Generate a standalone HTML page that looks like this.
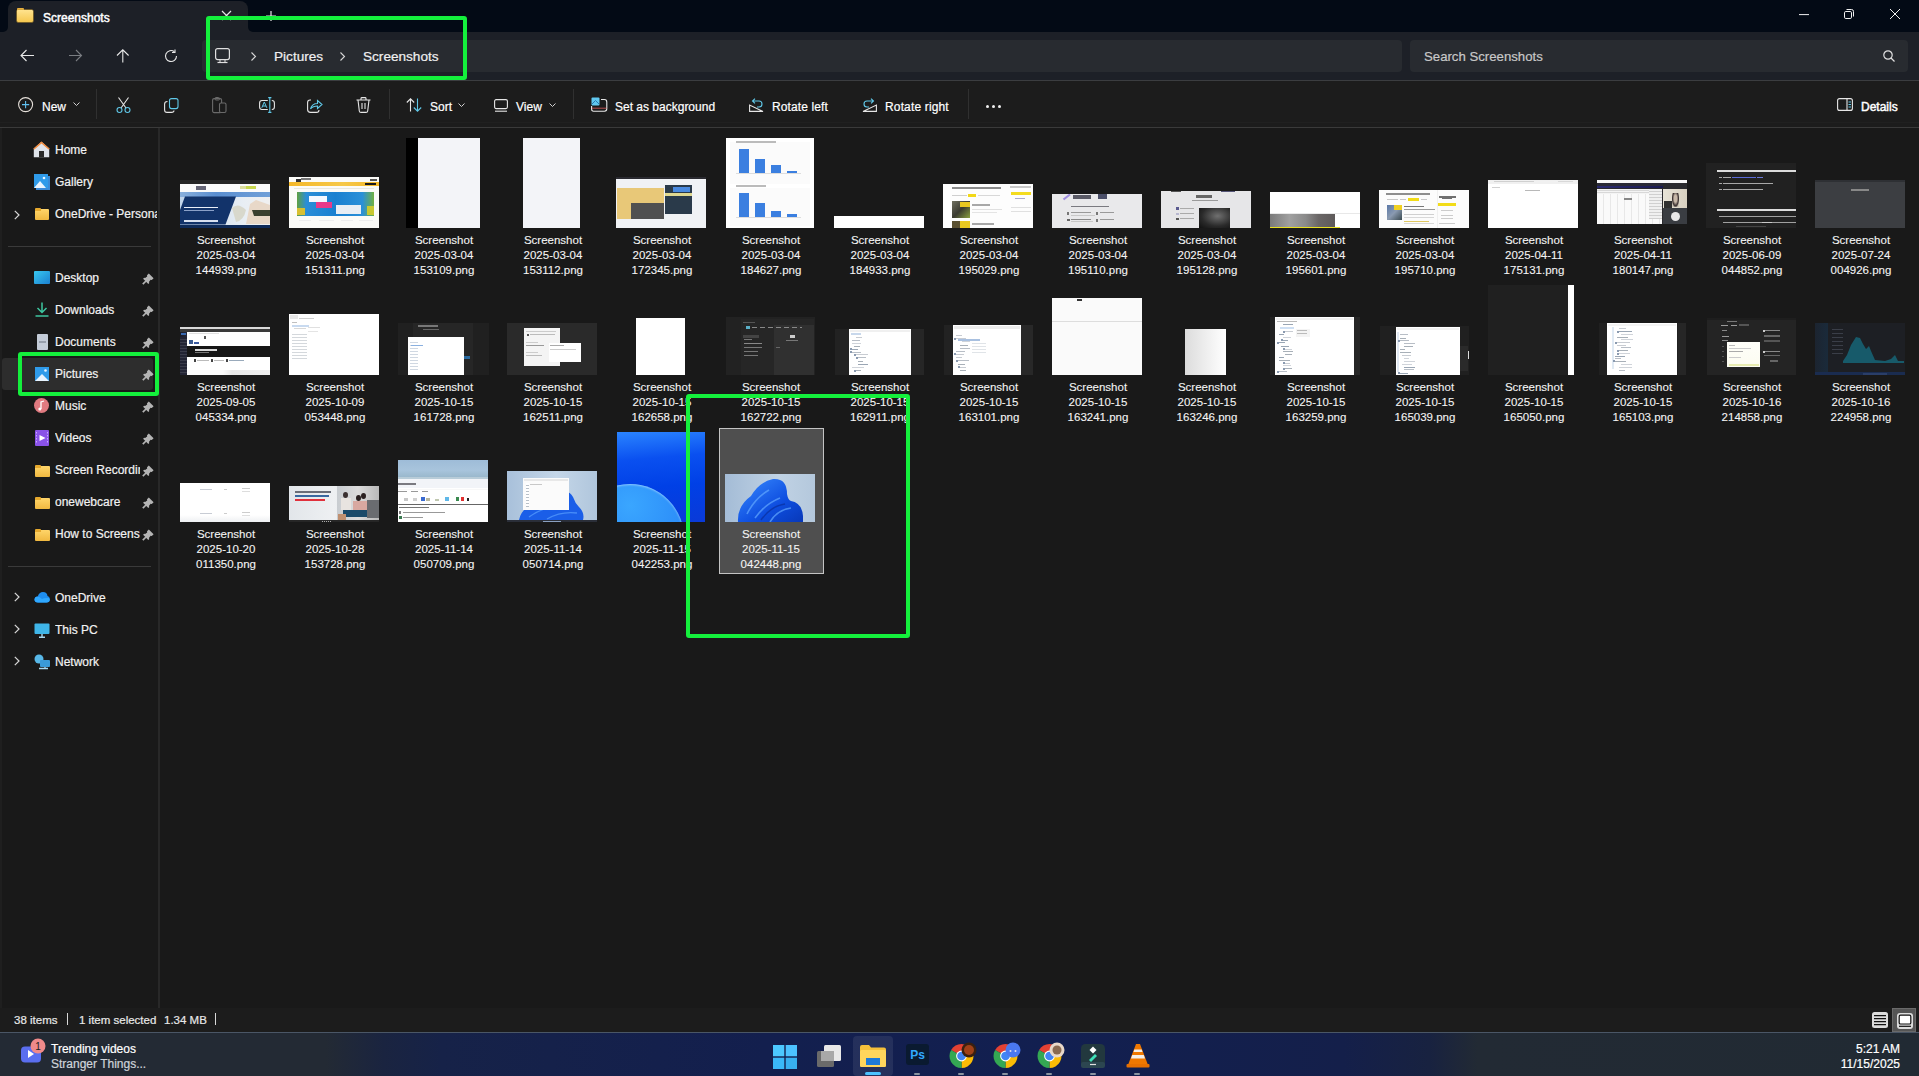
<!DOCTYPE html><html><head><meta charset="utf-8"><style>
*{box-sizing:border-box}
html,body{margin:0;padding:0}
body{width:1919px;height:1076px;overflow:hidden;position:relative;background:#191919;font-family:"Liberation Sans",sans-serif;color:#fff}
div{position:absolute}
.t{white-space:nowrap;line-height:1;-webkit-text-stroke:0.2px currentColor}
svg{position:absolute;overflow:visible}
.lbl{width:109px;text-align:center;font-size:11.5px;line-height:15px;color:#f2f2f2;white-space:nowrap}
</style></head><body><div style="left:0px;top:0px;width:1919px;height:32px;background:#030a15"></div><div style="left:0px;top:32px;width:1919px;height:48px;background:#1d2027"></div><div style="left:8px;top:1px;width:240px;height:40px;background:#1d2027;border-radius:8px 8px 0 0"></div><div style="left:0px;top:24px;width:9px;height:8px;background:#1d2027"></div><div style="left:0px;top:0px;width:8px;height:32px;background:#030a15;border-radius:0 0 5px 0"></div><div style="left:247px;top:24px;width:8px;height:8px;background:#1d2027"></div><div style="left:248px;top:0px;width:1671px;height:32px;background:#030a15;border-radius:0 0 0 5px"></div><div style="left:17px;top:8px;width:7px;height:3px;background:#e8b040;border-radius:1px 1px 0 0"></div><div style="left:17px;top:10px;width:16px;height:12px;background:linear-gradient(#ffe38e,#f6c850);border-radius:1px;box-shadow:0 0 0 0.5px #c89a30"></div><div class="t" style="left:43px;top:11.5px;font-size:12px;color:#ffffff;-webkit-text-stroke:0.45px #fff">Screenshots</div><svg style="left:222px;top:11px" width="9" height="9"><path d="M0 0L9 9M9 0L0 9" stroke="#e6e6e6" stroke-width="1.2"/></svg><svg style="left:266px;top:11px" width="10" height="10"><path d="M5 0V10M0 5H10" stroke="#e6e6e6" stroke-width="1.2"/></svg><svg style="left:1799px;top:14px" width="10" height="2"><path d="M0 0.6H10" stroke="#f0f0f0" stroke-width="1"/></svg><svg style="left:1844px;top:9px" width="10" height="10"><rect x="0.5" y="2.5" width="7" height="7" rx="1.3" fill="none" stroke="#f0f0f0" stroke-width="1"/><path d="M2.5 0.5H7.5Q9.5 0.5 9.5 2.5V7.5" fill="none" stroke="#f0f0f0" stroke-width="1"/></svg><svg style="left:1890px;top:9px" width="10" height="10"><path d="M0 0L10 10M10 0L0 10" stroke="#f0f0f0" stroke-width="1"/></svg><svg style="left:20px;top:49px" width="15" height="13"><path d="M6.5 1L1 6.5L6.5 12M1 6.5H14" fill="none" stroke="#e8e8e8" stroke-width="1.1"/></svg><svg style="left:68px;top:49px" width="15" height="13"><path d="M8 1L13.5 6.5L8 12M13.5 6.5H1" fill="none" stroke="#7a7d82" stroke-width="1.1"/></svg><svg style="left:116px;top:49px" width="14" height="14"><path d="M1 6.5L6.8 0.8L12.6 6.5M6.8 1V13.5" fill="none" stroke="#e8e8e8" stroke-width="1.1"/></svg><svg style="left:164px;top:49px" width="14" height="14"><path d="M12.5 7A5.5 5.5 0 1 1 10.4 2.7" fill="none" stroke="#e8e8e8" stroke-width="1.1"/><path d="M11 0.5V3.5H8" fill="none" stroke="#e8e8e8" stroke-width="1.1"/></svg><div style="left:202px;top:40px;width:1200px;height:32px;background:#282b30;border-radius:4px"></div><svg style="left:215px;top:48px" width="15" height="16"><rect x="0.6" y="0.6" width="13.8" height="11" rx="2" fill="none" stroke="#e0e0e0" stroke-width="1.2"/><path d="M2.5 14.5H12.5" stroke="#e0e0e0" stroke-width="1.2"/><path d="M5 12V14.5M10 12V14.5" stroke="#e0e0e0" stroke-width="1"/></svg><svg style="left:251px;top:52px" width="5" height="9"><path d="M0.5 0.5L4.5 4.5L0.5 8.5" fill="none" stroke="#d8d8d8" stroke-width="1.1"/></svg><div class="t" style="left:274px;top:50px;font-size:13.6px;color:#f0f0f0;">Pictures</div><svg style="left:340px;top:52px" width="5" height="9"><path d="M0.5 0.5L4.5 4.5L0.5 8.5" fill="none" stroke="#d8d8d8" stroke-width="1.1"/></svg><div class="t" style="left:363px;top:50px;font-size:13.6px;color:#f0f0f0;">Screenshots</div><div style="left:1410px;top:40px;width:498px;height:32px;background:#282b30;border-radius:4px"></div><div class="t" style="left:1424px;top:50px;font-size:13.2px;color:#c8c8c8;">Search Screenshots</div><svg style="left:1883px;top:50px" width="12" height="12"><circle cx="5" cy="5" r="4.2" fill="none" stroke="#e0e0e0" stroke-width="1.2"/><path d="M8 8L11.5 11.5" stroke="#e0e0e0" stroke-width="1.3"/></svg><div style="left:0px;top:80px;width:1919px;height:1px;background:#3b3d40"></div><div style="left:0px;top:81px;width:1919px;height:46px;background:#1c1c1c"></div><div style="left:0px;top:127px;width:1919px;height:1px;background:#3a3a3a"></div><div style="left:0px;top:122px;width:1919px;height:1px;background:#202020"></div><svg style="left:18px;top:97px" width="16" height="16" viewBox="0 0 16 16"><circle cx="7.6" cy="7.6" r="7" fill="none" stroke="#e6e0da" stroke-width="1.1"/><path d="M7.6 4V11.2M4 7.6H11.2" stroke="#60c0f0" stroke-width="1.1"/></svg><div class="t" style="left:42px;top:101px;font-size:12px;color:#ffffff;">New</div><svg style="left:73px;top:102px" width="7" height="5" viewBox="0 0 7 5"><path d="M0.5 0.5L3.5 3.5L6.5 0.5" fill="none" stroke="#d0d0d0" stroke-width="1"/></svg><div style="left:96px;top:89px;width:1px;height:30px;background:#303030"></div><svg style="left:116px;top:97px" width="15" height="16" viewBox="0 0 15 16"><path d="M2.5 0.5L10 11M12.5 0.5L5 11" stroke="#e6e6e6" stroke-width="1.1" fill="none"/><circle cx="3.5" cy="13" r="2.5" fill="none" stroke="#60c8e8" stroke-width="1.1"/><circle cx="11.5" cy="13" r="2.5" fill="none" stroke="#60c8e8" stroke-width="1.1"/></svg><svg style="left:164px;top:98px" width="15" height="15" viewBox="0 0 15 15"><rect x="5.5" y="0.6" width="8.5" height="10" rx="2" fill="none" stroke="#60c8e8" stroke-width="1.1"/><path d="M3.5 3.5Q0.6 3.5 0.6 6V12Q0.6 14.4 3 14.4H7.5Q10 14.4 10 12.5" fill="none" stroke="#e6e6e6" stroke-width="1.1"/></svg><svg style="left:212px;top:97px" width="15" height="16" viewBox="0 0 15 16"><rect x="0.6" y="1.6" width="9" height="14" rx="1.5" fill="none" stroke="#6a6a6a" stroke-width="1.1"/><rect x="3" y="0.5" width="4.5" height="2.5" rx="1" fill="none" stroke="#6a6a6a" stroke-width="1"/><rect x="7.5" y="6" width="6.5" height="9.5" rx="1.5" fill="#1c1c1c" stroke="#6a6a6a" stroke-width="1.1"/></svg><svg style="left:259px;top:97px" width="16" height="16" viewBox="0 0 16 16"><path d="M8.8 3.5H3Q0.6 3.5 0.6 6V10Q0.6 12.5 3 12.5H8.8M12.8 3.5H13Q15.4 3.5 15.4 6V10Q15.4 12.5 13 12.5H12.8" fill="none" stroke="#e6e6e6" stroke-width="1.1"/><path d="M10.8 0.6V15.4M9.2 0.6H12.4M9.2 15.4H12.4" stroke="#60c8e8" stroke-width="1.1"/><path d="M2.8 10.8L5.3 5L7.8 10.8M3.7 9H6.9" fill="none" stroke="#60c8e8" stroke-width="1"/></svg><svg style="left:307px;top:98px" width="16" height="15" viewBox="0 0 16 15"><path d="M4 2H3Q0.6 2 0.6 4.5V11.5Q0.6 14.4 3.5 14.4H9.5Q12 14.4 12 12" fill="none" stroke="#e6e6e6" stroke-width="1.1"/><path d="M3.5 11Q5 5.5 10.5 5.5V2.5L15 6.5L10.5 10.5V8Q6 8 3.5 11Z" fill="none" stroke="#60c8e8" stroke-width="1.1"/></svg><svg style="left:356px;top:97px" width="15" height="16" viewBox="0 0 15 16"><path d="M0.5 3H14.5M5 3V1.5Q5 0.6 6 0.6H9Q10 0.6 10 1.5V3M2 3L3.3 14Q3.5 15.4 5 15.4H10Q11.5 15.4 11.7 14L13 3M6 6V12M9 6V12" fill="none" stroke="#e6e6e6" stroke-width="1.1"/></svg><div style="left:389px;top:89px;width:1px;height:30px;background:#303030"></div><svg style="left:406px;top:98px" width="16" height="14" viewBox="0 0 16 14"><path d="M4.5 13.5V0.8M0.8 4.5L4.5 0.8L8.2 4.5" fill="none" stroke="#e6e6e6" stroke-width="1.1"/><path d="M11.5 0.5V13.2M7.8 9.5L11.5 13.2L15.2 9.5" fill="none" stroke="#60c8e8" stroke-width="1.1"/></svg><div class="t" style="left:430px;top:101px;font-size:12px;color:#ffffff;">Sort</div><svg style="left:458px;top:103px" width="7" height="5" viewBox="0 0 7 5"><path d="M0.5 0.5L3.5 3.5L6.5 0.5" fill="none" stroke="#d0d0d0" stroke-width="1"/></svg><svg style="left:494px;top:99px" width="14" height="13" viewBox="0 0 14 13"><rect x="0.6" y="0.6" width="12.8" height="9" rx="1.5" fill="none" stroke="#e6e6e6" stroke-width="1.1"/><path d="M1 12.2H13" stroke="#e6e6e6" stroke-width="1.1"/></svg><div class="t" style="left:516px;top:101px;font-size:12px;color:#ffffff;">View</div><svg style="left:549px;top:103px" width="7" height="5" viewBox="0 0 7 5"><path d="M0.5 0.5L3.5 3.5L6.5 0.5" fill="none" stroke="#d0d0d0" stroke-width="1"/></svg><div style="left:573px;top:89px;width:1px;height:30px;background:#303030"></div><svg style="left:591px;top:97px" width="17" height="15" viewBox="0 0 17 15"><rect x="0.5" y="0.5" width="8" height="8" rx="1" fill="#60c8f0"/><path d="M1 7L4.5 3.5L8 7" fill="none" stroke="#2a7ab0" stroke-width="1"/><path d="M10 2.5H13.5Q15.8 2.5 15.8 5V11.5Q15.8 14.2 13.5 14.2H2.5Q0.6 14.2 0.6 12V9" fill="none" stroke="#e6e6e6" stroke-width="1.1"/><path d="M1 11.2H15.5" stroke="#e06060" stroke-width="0.8"/></svg><div class="t" style="left:615px;top:101px;font-size:12px;color:#ffffff;">Set as background</div><svg style="left:749px;top:98px" width="15" height="14" viewBox="0 0 15 14"><path d="M0.6 13.4H14L0.6 7Z" fill="none" stroke="#e6e6e6" stroke-width="1.1"/><path d="M6 0.6L3.5 3L6 5.4M3.5 3H10Q13 3 13 6Q13 9 10 9H8" fill="none" stroke="#60c8e8" stroke-width="1.1"/></svg><div class="t" style="left:772px;top:101px;font-size:12px;color:#ffffff;letter-spacing:0.12px">Rotate left</div><svg style="left:862px;top:98px" width="15" height="14" viewBox="0 0 15 14"><path d="M14.4 13.4H1L14.4 7Z" fill="none" stroke="#e6e6e6" stroke-width="1.1"/><path d="M9 0.6L11.5 3L9 5.4M11.5 3H5Q2 3 2 6Q2 9 5 9H7" fill="none" stroke="#60c8e8" stroke-width="1.1"/></svg><div class="t" style="left:885px;top:101px;font-size:12px;color:#ffffff;letter-spacing:0.15px">Rotate right</div><div style="left:968px;top:89px;width:1px;height:30px;background:#303030"></div><div style="left:985.5px;top:104.5px;width:3px;height:3px;background:#f0f0f0;border-radius:50%"></div><div style="left:991.5px;top:104.5px;width:3px;height:3px;background:#f0f0f0;border-radius:50%"></div><div style="left:997.5px;top:104.5px;width:3px;height:3px;background:#f0f0f0;border-radius:50%"></div><svg style="left:1837px;top:98px" width="16" height="13" viewBox="0 0 16 13"><rect x="0.6" y="0.6" width="14.8" height="11.8" rx="2" fill="none" stroke="#e6e6e6" stroke-width="1.1"/><path d="M10 1V12.5" stroke="#e6e6e6" stroke-width="1.1"/><path d="M11.5 4H14M11.5 6.5H14M11.5 9H14" stroke="#60c8e8" stroke-width="1"/></svg><div class="t" style="left:1861px;top:101px;font-size:12px;color:#ffffff;-webkit-text-stroke:0.45px #fff">Details</div><div style="left:158px;top:128px;width:2px;height:880px;background:#282828"></div><div style="left:0px;top:128px;width:2px;height:880px;background:#1f1f1f"></div><div style="left:8px;top:246px;width:143px;height:1px;background:#3a3a3a"></div><div style="left:8px;top:566px;width:143px;height:1px;background:#3a3a3a"></div><div style="left:2px;top:358px;width:151px;height:32px;background:#2d2d2d;border-radius:3px"></div><div class="t" style="left:55px;top:144px;height:16px;font-size:12px;color:#f2f2f2;width:85px;overflow:hidden">Home</div><div class="t" style="left:55px;top:176px;height:16px;font-size:12px;color:#f2f2f2;width:85px;overflow:hidden">Gallery</div><div class="t" style="left:55px;top:208px;height:16px;font-size:12px;color:#f2f2f2;width:102px;overflow:hidden">OneDrive - Persona</div><div class="t" style="left:55px;top:272px;height:16px;font-size:12px;color:#f2f2f2;width:85px;overflow:hidden">Desktop</div><div class="t" style="left:55px;top:304px;height:16px;font-size:12px;color:#f2f2f2;width:85px;overflow:hidden">Downloads</div><div class="t" style="left:55px;top:336px;height:16px;font-size:12px;color:#f2f2f2;width:85px;overflow:hidden">Documents</div><div class="t" style="left:55px;top:368px;height:16px;font-size:12px;color:#f2f2f2;width:85px;overflow:hidden">Pictures</div><div class="t" style="left:55px;top:400px;height:16px;font-size:12px;color:#f2f2f2;width:85px;overflow:hidden">Music</div><div class="t" style="left:55px;top:432px;height:16px;font-size:12px;color:#f2f2f2;width:85px;overflow:hidden">Videos</div><div class="t" style="left:55px;top:464px;height:16px;font-size:12px;color:#f2f2f2;width:85px;overflow:hidden">Screen Recording</div><div class="t" style="left:55px;top:496px;height:16px;font-size:12px;color:#f2f2f2;width:85px;overflow:hidden">onewebcare</div><div class="t" style="left:55px;top:528px;height:16px;font-size:12px;color:#f2f2f2;width:85px;overflow:hidden">How to Screensh</div><div class="t" style="left:55px;top:592px;height:16px;font-size:12px;color:#f2f2f2;width:85px;overflow:hidden">OneDrive</div><div class="t" style="left:55px;top:624px;height:16px;font-size:12px;color:#f2f2f2;width:85px;overflow:hidden">This PC</div><div class="t" style="left:55px;top:656px;height:16px;font-size:12px;color:#f2f2f2;width:85px;overflow:hidden">Network</div><svg style="left:33px;top:141px" width="17" height="17" viewBox="0 0 17 17"><path d="M8.5 0.8L16.2 7.5V16.3H0.8V7.5Z" fill="#dfe3ea"/><path d="M8.5 0.5L16.8 7.7L15.6 8.5L8.5 2.4L1.4 8.5L0.2 7.7Z" fill="#f08a3c"/><rect x="6" y="10" width="5" height="6.3" fill="#2a2a2a"/></svg><svg style="left:34px;top:174px" width="16" height="16" viewBox="0 0 16 16"><rect x="2" y="2" width="14" height="14" fill="#3a8ad8"/><rect x="0" y="0" width="14" height="14" fill="#2f9bea"/><path d="M0 14L6 7L12 14Z" fill="#e8f4ff"/><circle cx="10" cy="4" r="1.3" fill="#e8f4ff"/></svg><svg style="left:14px;top:210px" width="6" height="10" viewBox="0 0 6 10"><path d="M0.8 0.8L5 5L0.8 9.2" fill="none" stroke="#d8d8d8" stroke-width="1.2"/></svg><div style="left:35px;top:209px;width:14px;height:11px;background:linear-gradient(#ffd56a,#f0b840);border-radius:1px"></div><div style="left:35px;top:208px;width:6px;height:3px;background:#e6a92e;border-radius:1px 1px 0 0"></div><svg style="left:34px;top:271px" width="16" height="13" viewBox="0 0 16 13"><rect width="16" height="13" rx="1" fill="url(#gd)"/><defs><linearGradient id="gd" x1="0" y1="0" x2="1" y2="1"><stop offset="0" stop-color="#38c8f0"/><stop offset="1" stop-color="#1b80d0"/></linearGradient></defs></svg><svg style="left:35px;top:302px" width="14" height="15" viewBox="0 0 14 15"><path d="M7 0.5V10M2.5 6L7 10.5L11.5 6" fill="none" stroke="#3ec6a0" stroke-width="1.5"/><path d="M0.5 14H13.5" stroke="#3ec6a0" stroke-width="1.5"/></svg><svg style="left:37px;top:334px" width="11" height="16" viewBox="0 0 11 16"><rect width="11" height="16" rx="1" fill="#c4ccd8"/><path d="M2 8H9" stroke="#6a7380" stroke-width="1"/></svg><svg style="left:35px;top:367px" width="14" height="14" viewBox="0 0 14 14"><rect width="14" height="14" fill="#2f9bea"/><path d="M0 14L7 7L14 14Z" fill="#e8f4ff"/><circle cx="10.5" cy="3.5" r="1.3" fill="#e8f4ff"/></svg><svg style="left:34px;top:398px" width="15" height="15" viewBox="0 0 15 15"><circle cx="7.5" cy="7.5" r="7.5" fill="#e07a80"/><path d="M7 11V4L10 3" fill="none" stroke="#fff" stroke-width="1.3"/><circle cx="5.8" cy="11" r="1.5" fill="#fff"/></svg><svg style="left:35px;top:430px" width="14" height="16" viewBox="0 0 14 16"><rect width="14" height="16" rx="1" fill="#8a52e8"/><path d="M4.5 5L10.5 8L4.5 11Z" fill="#fff"/><path d="M1.5 2V14M12.5 2V14" stroke="#c8a8ff" stroke-width="1" stroke-dasharray="1.5 1.5"/></svg><div style="left:35px;top:466px;width:15px;height:11px;background:linear-gradient(#ffd56a,#f0b840);border-radius:1px"></div><div style="left:35px;top:465px;width:6px;height:3px;background:#e6a92e;border-radius:1px 1px 0 0"></div><div style="left:35px;top:498px;width:15px;height:11px;background:linear-gradient(#ffd56a,#f0b840);border-radius:1px"></div><div style="left:35px;top:497px;width:6px;height:3px;background:#e6a92e;border-radius:1px 1px 0 0"></div><div style="left:35px;top:530px;width:15px;height:11px;background:linear-gradient(#ffd56a,#f0b840);border-radius:1px"></div><div style="left:35px;top:529px;width:6px;height:3px;background:#e6a92e;border-radius:1px 1px 0 0"></div><svg style="left:142px;top:273px" width="12" height="12" viewBox="0 0 12 12"><path d="M6.8 0.4L11.6 5.2L9.8 7L8.6 6.8L6.9 8.9L7.3 9.9L6.3 10.9L1.1 5.7L2.1 4.7L3.1 5.1L5.2 3.4L5 2.2Z" fill="#b4b4b4"/><path d="M4 8L0.8 11.2" stroke="#b4b4b4" stroke-width="1.7"/></svg><svg style="left:142px;top:305px" width="12" height="12" viewBox="0 0 12 12"><path d="M6.8 0.4L11.6 5.2L9.8 7L8.6 6.8L6.9 8.9L7.3 9.9L6.3 10.9L1.1 5.7L2.1 4.7L3.1 5.1L5.2 3.4L5 2.2Z" fill="#b4b4b4"/><path d="M4 8L0.8 11.2" stroke="#b4b4b4" stroke-width="1.7"/></svg><svg style="left:142px;top:337px" width="12" height="12" viewBox="0 0 12 12"><path d="M6.8 0.4L11.6 5.2L9.8 7L8.6 6.8L6.9 8.9L7.3 9.9L6.3 10.9L1.1 5.7L2.1 4.7L3.1 5.1L5.2 3.4L5 2.2Z" fill="#b4b4b4"/><path d="M4 8L0.8 11.2" stroke="#b4b4b4" stroke-width="1.7"/></svg><svg style="left:142px;top:369px" width="12" height="12" viewBox="0 0 12 12"><path d="M6.8 0.4L11.6 5.2L9.8 7L8.6 6.8L6.9 8.9L7.3 9.9L6.3 10.9L1.1 5.7L2.1 4.7L3.1 5.1L5.2 3.4L5 2.2Z" fill="#b4b4b4"/><path d="M4 8L0.8 11.2" stroke="#b4b4b4" stroke-width="1.7"/></svg><svg style="left:142px;top:401px" width="12" height="12" viewBox="0 0 12 12"><path d="M6.8 0.4L11.6 5.2L9.8 7L8.6 6.8L6.9 8.9L7.3 9.9L6.3 10.9L1.1 5.7L2.1 4.7L3.1 5.1L5.2 3.4L5 2.2Z" fill="#b4b4b4"/><path d="M4 8L0.8 11.2" stroke="#b4b4b4" stroke-width="1.7"/></svg><svg style="left:142px;top:433px" width="12" height="12" viewBox="0 0 12 12"><path d="M6.8 0.4L11.6 5.2L9.8 7L8.6 6.8L6.9 8.9L7.3 9.9L6.3 10.9L1.1 5.7L2.1 4.7L3.1 5.1L5.2 3.4L5 2.2Z" fill="#b4b4b4"/><path d="M4 8L0.8 11.2" stroke="#b4b4b4" stroke-width="1.7"/></svg><svg style="left:142px;top:465px" width="12" height="12" viewBox="0 0 12 12"><path d="M6.8 0.4L11.6 5.2L9.8 7L8.6 6.8L6.9 8.9L7.3 9.9L6.3 10.9L1.1 5.7L2.1 4.7L3.1 5.1L5.2 3.4L5 2.2Z" fill="#b4b4b4"/><path d="M4 8L0.8 11.2" stroke="#b4b4b4" stroke-width="1.7"/></svg><svg style="left:142px;top:497px" width="12" height="12" viewBox="0 0 12 12"><path d="M6.8 0.4L11.6 5.2L9.8 7L8.6 6.8L6.9 8.9L7.3 9.9L6.3 10.9L1.1 5.7L2.1 4.7L3.1 5.1L5.2 3.4L5 2.2Z" fill="#b4b4b4"/><path d="M4 8L0.8 11.2" stroke="#b4b4b4" stroke-width="1.7"/></svg><svg style="left:142px;top:529px" width="12" height="12" viewBox="0 0 12 12"><path d="M6.8 0.4L11.6 5.2L9.8 7L8.6 6.8L6.9 8.9L7.3 9.9L6.3 10.9L1.1 5.7L2.1 4.7L3.1 5.1L5.2 3.4L5 2.2Z" fill="#b4b4b4"/><path d="M4 8L0.8 11.2" stroke="#b4b4b4" stroke-width="1.7"/></svg><svg style="left:14px;top:592px" width="6" height="10" viewBox="0 0 6 10"><path d="M0.8 0.8L5 5L0.8 9.2" fill="none" stroke="#d8d8d8" stroke-width="1.2"/></svg><svg style="left:14px;top:624px" width="6" height="10" viewBox="0 0 6 10"><path d="M0.8 0.8L5 5L0.8 9.2" fill="none" stroke="#d8d8d8" stroke-width="1.2"/></svg><svg style="left:14px;top:656px" width="6" height="10" viewBox="0 0 6 10"><path d="M0.8 0.8L5 5L0.8 9.2" fill="none" stroke="#d8d8d8" stroke-width="1.2"/></svg><svg style="left:34px;top:591px" width="16" height="12" viewBox="0 0 16 12"><path d="M4 11.5Q0.5 11.5 0.5 8.5Q0.5 5.5 3.8 5.5Q5 1 9 1Q13 1 13.5 5Q15.8 5.5 15.8 8.3Q15.8 11.5 12.5 11.5Z" fill="#1e8ef0"/><path d="M4 11.5Q0.5 11.5 0.5 8.5Q0.5 6 3 5.6Q6 6 8 8Q10 6.5 15 7Q15.8 8 15.8 8.3Q15.8 11.5 12.5 11.5Z" fill="#2fa8ff"/></svg><svg style="left:34px;top:623px" width="16" height="15" viewBox="0 0 16 15"><rect x="0.5" y="0.5" width="15" height="10.5" rx="1" fill="#3fb5e8"/><path d="M5 14.2H11M8 11V14" stroke="#a8d8f0" stroke-width="1.4"/></svg><svg style="left:34px;top:654px" width="16" height="16" viewBox="0 0 16 16"><circle cx="5" cy="5" r="4.5" fill="#58b8e8"/><rect x="6" y="6" width="10" height="7" rx="1" fill="#3a9ad8"/><path d="M5 14.5H14M11 13V15" stroke="#a8d8f0" stroke-width="1.3"/></svg><div style="left:719px;top:428px;width:105px;height:146px;background:#4f4f4f;border:1px solid #c4c4c4"></div><div style="left:180px;top:180px;width:90px;height:48px;background:#b8d0e8;overflow:hidden"><div style="left:0px;top:0px;width:90px;height:3.5px;background:#262626"></div><div style="left:0px;top:3.5px;width:90px;height:8px;background:#fbfbfb"></div><div style="left:16px;top:6px;width:10px;height:4px;background:#667"></div><div style="left:60px;top:6px;width:6px;height:3px;background:#dde0a0"></div><div style="left:66px;top:6px;width:10px;height:3px;background:#c8d850"></div><div style="left:0px;top:11.5px;width:90px;height:5px;background:linear-gradient(90deg,#8ab0dc,#5a8ed0 40%,#70a0d8)"></div><div style="left:0px;top:16.5px;width:90px;height:28px;background:linear-gradient(90deg,#c0d4ea,#e8eef4 70%,#f0f0f0)"></div><svg style="left:0;top:0" width="90" height="48"><path d="M5 16.5H56L45.5 44.5H0V30Z" fill="#12336a"/><path d="M52 28Q58 22 66 30Q64 40 56 42Z" fill="#d8d8cc"/><path d="M70 24L76 20L90 25V44H66Z" fill="#e8d8c8"/><path d="M72 30H90V36H74Z" fill="#3a4030"/></svg><div style="left:4px;top:26.5px;width:34px;height:1.5px;background:#e8eef8"></div><div style="left:4px;top:30px;width:30px;height:1.2px;background:#8aa0c8"></div><div style="left:4px;top:40px;width:34px;height:2px;background:#d8e0f0"></div><div style="left:0px;top:44.5px;width:90px;height:3.5px;background:#0e2a58"></div></div><div style="left:289px;top:177px;width:90px;height:51px;background:#fbfbf8;overflow:hidden"><div style="left:7px;top:1.5px;width:5px;height:3px;background:#333"></div><div style="left:12px;top:1px;width:10px;height:1.5px;background:#777"></div><div style="left:81px;top:1.5px;width:7px;height:2.5px;background:#555"></div><div style="left:0px;top:5px;width:90px;height:4px;background:linear-gradient(90deg,#f4b828,#f6c848 60%,#f4b828)"></div><div style="left:76px;top:6px;width:11px;height:2px;background:#1a1a1a"></div><div style="left:5px;top:10.5px;width:80px;height:1px;background:#e8e8e0"></div><div style="left:8px;top:15px;width:77px;height:23.5px;background:linear-gradient(90deg,#60a040 0%,#2a8ed8 12%,#1a80d0 50%,#2a90d8 85%,#70b040 100%)"></div><div style="left:20px;top:19px;width:18px;height:6px;background:#f4f8ff"></div><div style="left:27px;top:25px;width:16px;height:6px;background:#e83a8a"></div><div style="left:47px;top:28px;width:25px;height:9px;background:#e8eef4"></div><div style="left:8px;top:31px;width:8px;height:7px;background:#d8c030"></div><div style="left:78px;top:29px;width:7px;height:9px;background:#c8c830"></div><div style="left:10px;top:43px;width:12px;height:1px;background:#eee"></div><div style="left:30px;top:43px;width:15px;height:1px;background:#eee"></div><div style="left:52px;top:43px;width:12px;height:1px;background:#eee"></div><div style="left:70px;top:43px;width:14px;height:1px;background:#eee"></div></div><div style="left:406px;top:138px;width:12px;height:90px;background:#000;overflow:hidden"></div><div style="left:418px;top:138px;width:62px;height:90px;background:#f3f4f8;overflow:hidden"></div><div style="left:523px;top:138px;width:57px;height:90px;background:#f3f4f8;overflow:hidden"></div><div style="left:616px;top:177px;width:90px;height:51px;background:#f0f2f5;overflow:hidden"><div style="left:0px;top:0px;width:90px;height:2px;background:#2a2a30"></div><div style="left:1px;top:11px;width:47px;height:31px;background:#e8c878"></div><div style="left:15px;top:26px;width:33px;height:16px;background:#505050"></div><div style="left:49px;top:8px;width:27px;height:29px;background:#2a3a4a"></div><div style="left:57px;top:10px;width:17px;height:5px;background:#4a8ae0"></div><div style="left:49px;top:16px;width:27px;height:3px;background:#e0d890"></div></div><div style="left:726px;top:138px;width:88px;height:90px;background:#ffffff;overflow:hidden"><div style="left:4px;top:4px;width:80px;height:42px;background:#fbfbfb"></div><div style="left:4px;top:50px;width:80px;height:38px;background:#fbfbfb"></div><div style="left:13px;top:11px;width:10px;height:24px;background:#3b7fe0"></div><div style="left:29px;top:21px;width:10px;height:14px;background:#3b7fe0"></div><div style="left:45px;top:27px;width:10px;height:8px;background:#3b7fe0"></div><div style="left:61px;top:33px;width:10px;height:2px;background:#3b7fe0"></div><div style="left:13px;top:55px;width:10px;height:24px;background:#3b7fe0"></div><div style="left:29px;top:65px;width:10px;height:14px;background:#3b7fe0"></div><div style="left:45px;top:73px;width:10px;height:6px;background:#3b7fe0"></div><div style="left:61px;top:76px;width:10px;height:3px;background:#3b7fe0"></div><div style="left:10px;top:35px;width:65px;height:1px;background:#ddd"></div><div style="left:10px;top:79px;width:65px;height:1px;background:#ddd"></div><div style="left:10px;top:3px;width:40px;height:1.5px;background:#bbb"></div><div style="left:10px;top:47px;width:30px;height:1.5px;background:#bbb"></div></div><div style="left:834px;top:216px;width:90px;height:12px;background:#ffffff;overflow:hidden"></div><div style="left:943px;top:184px;width:90px;height:44px;background:#fdfdfd;overflow:hidden"><div style="left:9px;top:3px;width:49px;height:2.2px;background:#8c8c8c"></div><div style="left:9px;top:10.5px;width:15px;height:1.5px;background:#cfcfcf"></div><div style="left:25px;top:9.5px;width:8px;height:3.5px;background:#f2d818"></div><div style="left:35px;top:10.5px;width:22px;height:1.5px;background:#d8d8d8"></div><div style="left:67px;top:1.5px;width:21px;height:2.5px;background:#c8c8c8"></div><div style="left:68px;top:8px;width:20px;height:3.3px;background:#f4dc20"></div><div style="left:72px;top:14px;width:10px;height:1px;background:#aac"></div><div style="left:9px;top:17px;width:18px;height:17px;background:linear-gradient(135deg,#707060,#3a3a30 50%,#8aa040)"></div><div style="left:17px;top:18px;width:10px;height:5px;background:#e8c820"></div><div style="left:29px;top:19.5px;width:18px;height:2px;background:#a8a8a8"></div><div style="left:29px;top:25px;width:30px;height:1.2px;background:#e0e0e0"></div><div style="left:29px;top:28px;width:25px;height:1.2px;background:#e4e4e4"></div><div style="left:9px;top:37px;width:18px;height:7px;background:#5a5030"></div><div style="left:17px;top:37px;width:10px;height:7px;background:#e8c820"></div><div style="left:29px;top:39px;width:22px;height:2px;background:#a8a8a8"></div><div style="left:68px;top:23px;width:20px;height:1px;background:#e0e0e0"></div><div style="left:68px;top:27px;width:20px;height:1px;background:#e0e0e0"></div></div><div style="left:1052px;top:194px;width:90px;height:34px;background:#e9e9eb;overflow:hidden"><svg style="left:0;top:0" width="90" height="34"><path d="M11.5 5.5L18 0.5" stroke="#a08ee0" stroke-width="2.2"/></svg><div style="left:20.5px;top:1px;width:18px;height:3.5px;background:#5a5a66"></div><div style="left:46px;top:0px;width:9px;height:5px;background:#4a4e68"></div><div style="left:19px;top:11.5px;width:38px;height:1.5px;background:#7a7a80"></div><div style="left:15px;top:17.5px;width:2px;height:3px;background:#777"></div><div style="left:19px;top:18px;width:20px;height:1px;background:#999"></div><div style="left:19px;top:20.5px;width:24px;height:1px;background:#c8c8c8"></div><div style="left:44px;top:18px;width:2px;height:3px;background:#777"></div><div style="left:48px;top:18px;width:14px;height:1px;background:#999"></div><div style="left:15px;top:24.5px;width:3px;height:2.5px;background:#666"></div><div style="left:19px;top:24.5px;width:20px;height:1px;background:#888"></div><div style="left:19px;top:27px;width:22px;height:1px;background:#c8c8c8"></div><div style="left:44px;top:24.5px;width:2px;height:3px;background:#777"></div><div style="left:48px;top:25px;width:14px;height:1px;background:#999"></div></div><div style="left:1161px;top:191px;width:90px;height:37px;background:#e6e6e8;overflow:hidden"><div style="left:10px;top:0px;width:10px;height:0.8px;background:#555"></div><div style="left:60px;top:0px;width:14px;height:0.8px;background:#557"></div><div style="left:35px;top:4px;width:16px;height:2.5px;background:#666"></div><div style="left:31px;top:8.5px;width:26px;height:1px;background:#9a9a9a"></div><div style="left:15px;top:16px;width:3px;height:3px;background:#5a5a90"></div><div style="left:19px;top:16.5px;width:14px;height:1px;background:#aaa"></div><div style="left:15px;top:21.5px;width:3px;height:2.5px;background:#b8b8d0"></div><div style="left:19px;top:22px;width:14px;height:1px;background:#aaa"></div><div style="left:15px;top:26.5px;width:3px;height:2.5px;background:#555"></div><div style="left:19px;top:27px;width:14px;height:1px;background:#aaa"></div><div style="left:38px;top:16.5px;width:31px;height:20.5px;background:radial-gradient(ellipse at 60% 40%,#707070,#2a2a2a 60%,#101010)"></div></div><div style="left:1270px;top:192px;width:90px;height:36px;background:#ffffff;overflow:hidden"><div style="left:0px;top:21px;width:90px;height:0.8px;background:#e8e8e8"></div><div style="left:0px;top:22px;width:65px;height:13px;background:linear-gradient(90deg,#7a7a7a,#a0a0a0 30%,#8a8a8a 55%,#6a6666 75%,#5e5a5a)"></div><div style="left:0px;top:35px;width:70px;height:1px;background:#e8e020"></div></div><div style="left:1379px;top:190px;width:90px;height:38px;background:#fcfcfc;overflow:hidden"><div style="left:7px;top:2.5px;width:44px;height:2.3px;background:#8e8e8e"></div><div style="left:8px;top:8.8px;width:11px;height:1px;background:#c8c8c8"></div><div style="left:21px;top:8.8px;width:6px;height:1px;background:#c8c8c8"></div><div style="left:29px;top:7.5px;width:11px;height:3.5px;background:#f2dc18"></div><div style="left:42px;top:8.8px;width:6px;height:1px;background:#c8c8c8"></div><div style="left:60px;top:6px;width:17px;height:1.5px;background:#707070"></div><div style="left:63px;top:8px;width:10px;height:1.2px;background:#707070"></div><div style="left:59px;top:12.8px;width:18px;height:3.2px;background:#f2dc18"></div><div style="left:7.5px;top:15px;width:15.5px;height:15px;background:linear-gradient(135deg,#5a78a8,#8a9ab0 50%,#3a4a50)"></div><div style="left:15px;top:15px;width:8px;height:5px;background:#f0d020"></div><div style="left:25px;top:16px;width:20px;height:1px;background:#777"></div><div style="left:25px;top:18.5px;width:31px;height:1px;background:#999"></div><div style="left:25px;top:23.5px;width:30px;height:1px;background:#d0d0d0"></div><div style="left:25px;top:26.5px;width:30px;height:1px;background:#d8d8d8"></div><div style="left:25px;top:31px;width:25px;height:1px;background:#e0c860"></div><div style="left:25px;top:33px;width:30px;height:1px;background:#d8d8d8"></div><div style="left:62px;top:20px;width:12px;height:1px;background:#ccc"></div><div style="left:62px;top:25px;width:12px;height:1px;background:#ccc"></div><div style="left:62px;top:28px;width:12px;height:1px;background:#ccc"></div><div style="left:60px;top:33px;width:16px;height:1px;background:#ccc"></div><div style="left:58px;top:0px;width:1px;height:38px;background:#f0f0f0"></div></div><div style="left:1488px;top:180px;width:90px;height:48px;background:#ffffff;overflow:hidden"><div style="left:0px;top:0px;width:90px;height:3.5px;background:#f0f0f0"></div><div style="left:6px;top:1px;width:40px;height:1px;background:#d0d0d0"></div><div style="left:70px;top:1px;width:15px;height:1px;background:#d8d8d8"></div><div style="left:4px;top:7px;width:8px;height:1px;background:#d0d0d0"></div><div style="left:37px;top:10px;width:15px;height:1px;background:#b8b8b8"></div></div><div style="left:1597px;top:180px;width:90px;height:48px;background:#2a2a2e;overflow:hidden"><div style="left:0px;top:0px;width:90px;height:3.3px;background:#f8f8f8"></div><div style="left:0px;top:3.3px;width:66px;height:2.5px;background:#2a2a36"></div><div style="left:0px;top:5.8px;width:66px;height:2.7px;background:linear-gradient(90deg,#2a2a70,#1a1a50)"></div><div style="left:0px;top:8.5px;width:65px;height:35.5px;background:repeating-linear-gradient(90deg,#fafafa 0 6px,#e8e8e8 6px 7px)"></div><div style="left:0px;top:9px;width:65px;height:5px;background:repeating-linear-gradient(#f4f4f4 0 1px,#d8d8d8 1px 2px)"></div><div style="left:27px;top:18px;width:8px;height:2px;background:#888"></div><div style="left:52px;top:9px;width:13px;height:30px;background:repeating-linear-gradient(#f0f0f0 0 2px,#d0d0d0 2px 3px)"></div><div style="left:66px;top:9px;width:24px;height:19px;background:linear-gradient(90deg,#e8e4d8,#d8d0c0)"></div><div style="left:75px;top:13px;width:7px;height:14px;background:radial-gradient(ellipse at 50% 40%,#c8b8a8 30%,#3a3030 60%,#d0c8b8 80%)"></div><div style="left:67px;top:21px;width:8px;height:7px;background:#303030"></div><div style="left:66px;top:28px;width:24px;height:16px;background:#3a3d42"></div><div style="left:74px;top:32px;width:9px;height:9px;border-radius:50%;background:#e8e8e8"></div><div style="left:0px;top:44px;width:90px;height:4px;background:#1a1a1a"></div></div><div style="left:1706px;top:163px;width:90px;height:65px;background:#212121;overflow:hidden"><div style="left:11px;top:7px;width:79px;height:2.2px;background:#dcdcdc"></div><div style="left:13px;top:14px;width:3px;height:1.3px;background:#aaa"></div><div style="left:17px;top:14px;width:8px;height:1.3px;background:#aaa"></div><div style="left:26px;top:14px;width:24px;height:1.3px;background:#5a6ad8"></div><div style="left:51px;top:14px;width:6px;height:1.3px;background:#6a78d8"></div><div style="left:13px;top:20px;width:3px;height:1.3px;background:#aaa"></div><div style="left:17px;top:20px;width:50px;height:1.3px;background:#a8a8a8"></div><div style="left:13px;top:26px;width:3px;height:1.3px;background:#aaa"></div><div style="left:17px;top:26px;width:40px;height:1.3px;background:#a8a8a8"></div><div style="left:11px;top:46px;width:79px;height:2.2px;background:#dcdcdc"></div><div style="left:13px;top:52.5px;width:77px;height:1.3px;background:#a0a0a0"></div><div style="left:17px;top:58.5px;width:73px;height:1.3px;background:#a0a0a0"></div><div style="left:56px;top:58.5px;width:10px;height:1.3px;background:#c8c8c8"></div><div style="left:30px;top:63px;width:30px;height:1px;background:#444"></div></div><div style="left:1815px;top:180px;width:90px;height:48px;background:#3c3e42;overflow:hidden"><div style="left:36px;top:9px;width:18px;height:2px;background:#888"></div><div style="left:0px;top:0px;width:90px;height:2px;background:#2e3034"></div></div><div style="left:180px;top:327px;width:90px;height:48px;background:#ffffff;overflow:hidden"><div style="left:0px;top:0px;width:90px;height:2px;background:#d8d8d8"></div><div style="left:0px;top:2px;width:90px;height:2.5px;background:#3a3a3a"></div><div style="left:0px;top:4.5px;width:7px;height:43.5px;background:linear-gradient(90deg,#1a1c28,#262838)"></div><div style="left:1px;top:6px;width:5px;height:2px;background:#3a6ab0"></div><div style="left:0px;top:10px;width:7px;height:38px;background:repeating-linear-gradient(#222434 0 2px,#3a3c4a 2px 3px)"></div><div style="left:9px;top:6px;width:30px;height:1px;background:#e0e0e0"></div><div style="left:24px;top:9px;width:2px;height:3px;background:#555"></div><div style="left:9px;top:13px;width:4px;height:4px;background:#3a5a90"></div><div style="left:14px;top:15px;width:5px;height:1.5px;background:#3a5aa0"></div><div style="left:7px;top:19px;width:83px;height:11px;background:#161616"></div><div style="left:15px;top:22px;width:22px;height:1.8px;background:#d8d8d8"></div><div style="left:15px;top:25px;width:14px;height:1px;background:#777"></div><div style="left:14px;top:32px;width:2px;height:2.5px;background:#444"></div><div style="left:17px;top:33px;width:12px;height:1px;background:#bbb"></div><div style="left:31px;top:32px;width:2px;height:2.5px;background:#444"></div><div style="left:34px;top:33px;width:10px;height:1px;background:#bbb"></div><div style="left:46px;top:32px;width:2px;height:2.5px;background:#444"></div><div style="left:49px;top:33px;width:15px;height:1px;background:#9ab"></div><div style="left:7px;top:43px;width:90px;height:5px;background:linear-gradient(90deg,#fafafa 40%,#e8e8e8 50%,#efefef)"></div></div><div style="left:289px;top:314px;width:90px;height:61px;background:#ffffff;overflow:hidden"><div style="left:1px;top:1px;width:8px;height:4px;background:#e8e8e8"></div><div style="left:10px;top:4px;width:15px;height:1px;background:#d0d0d0"></div><div style="left:3px;top:8px;width:5px;height:1px;background:#c0c0c0"></div><div style="left:3px;top:11px;width:17px;height:2px;background:#c8daf0"></div><div style="left:5px;top:14px;width:12px;height:1px;background:#d8d8d8"></div><div style="left:19px;top:13px;width:12px;height:1px;background:#e0e0e0"></div><div style="left:19px;top:17px;width:10px;height:1px;background:#e4e4e4"></div><div style="left:3px;top:18px;width:15px;height:29px;background:repeating-linear-gradient(#fff 0 2px,#d4d8dc 2px 3px)"></div></div><div style="left:398px;top:323px;width:91px;height:52px;background:#202020;overflow:hidden"><div style="left:15px;top:0px;width:60px;height:52px;background:#262626"></div><div style="left:20px;top:2px;width:20px;height:1.5px;background:#777"></div><div style="left:25px;top:6px;width:8px;height:1px;background:#666"></div><div style="left:33px;top:6px;width:8px;height:1px;background:#666"></div><div style="left:10px;top:14px;width:56px;height:38px;background:#ffffff"></div><div style="left:12px;top:17px;width:8px;height:30px;background:repeating-linear-gradient(#fff 0 2px,#d0d8e2 2px 3px)"></div><div style="left:13px;top:22px;width:12px;height:1.2px;background:#8ab0e0"></div><div style="left:66px;top:33px;width:6px;height:3px;background:#2a6aa0"></div></div><div style="left:507px;top:323px;width:90px;height:52px;background:#2a2a2a;overflow:hidden"><div style="left:17px;top:5px;width:36px;height:38px;background:#f4f4f4"></div><div style="left:19px;top:8px;width:30px;height:1px;background:#ccc"></div><div style="left:20px;top:11px;width:2px;height:2px;background:#555"></div><div style="left:23px;top:11px;width:25px;height:1px;background:#bbb"></div><div style="left:19px;top:19px;width:12px;height:1px;background:#ccc"></div><div style="left:19px;top:22px;width:18px;height:1.2px;background:#999"></div><div style="left:19px;top:29px;width:12px;height:1px;background:#ccc"></div><div style="left:19px;top:32px;width:16px;height:1px;background:#bbb"></div><div style="left:41.5px;top:19.5px;width:32px;height:19px;background:#ffffff"></div><div style="left:43px;top:22px;width:14px;height:1px;background:#aaa"></div><div style="left:43px;top:26px;width:26px;height:1px;background:#ccc"></div></div><div style="left:636px;top:318px;width:49px;height:57px;background:#ffffff;overflow:hidden"></div><div style="left:726px;top:317px;width:89px;height:58px;background:#222222;overflow:hidden"><div style="left:15px;top:2px;width:73px;height:56px;background:#262626"></div><div style="left:48px;top:8px;width:40px;height:50px;background:#303030"></div><div style="left:17px;top:5px;width:12px;height:1px;background:#555"></div><div style="left:20px;top:9px;width:4px;height:3px;background:#5ab0c8"></div><div style="left:26px;top:10px;width:50px;height:1.2px;background:repeating-linear-gradient(90deg,#888 0 5px,transparent 5px 8px)"></div><div style="left:17px;top:18px;width:16px;height:2.5px;background:#444"></div><div style="left:18px;top:22px;width:8px;height:1px;background:#777"></div><div style="left:18px;top:26px;width:18px;height:1px;background:#888"></div><div style="left:18px;top:30px;width:18px;height:1px;background:#777"></div><div style="left:18px;top:34px;width:14px;height:1px;background:#777"></div><div style="left:18px;top:38px;width:14px;height:1px;background:#777"></div><div style="left:64px;top:18px;width:5px;height:3px;background:#ccc"></div><div style="left:60px;top:23px;width:12px;height:1px;background:#777"></div><div style="left:50px;top:30px;width:4px;height:1px;background:#666"></div></div><div style="left:835px;top:329px;width:89px;height:46px;background:#222222;overflow:hidden"><div style="left:14px;top:0px;width:62px;height:46px;background:#ffffff"></div><div style="left:15px;top:1px;width:60px;height:2px;background:#f0f0f0"></div><div style="left:16px;top:4px;width:10px;height:2px;background:#c8d8ec"></div><div style="left:21px;top:8px;width:6px;height:1px;background:#c8ccd2"></div><div style="left:17px;top:11px;width:8px;height:1px;background:#b8bec6"></div><div style="left:17px;top:13.5px;width:9px;height:1px;background:#d0d4da"></div><div style="left:19px;top:16.5px;width:6px;height:1px;background:#a8b0b8"></div><div style="left:17px;top:19.5px;width:6px;height:1px;background:#9aa6b4"></div><div style="left:15px;top:19.0px;width:1.5px;height:2px;background:#8a9ab0"></div><div style="left:17px;top:22.5px;width:9px;height:1px;background:#b8bec6"></div><div style="left:15px;top:22.0px;width:1.5px;height:2px;background:#8a9ab0"></div><div style="left:21px;top:25.0px;width:12px;height:1px;background:#c8ccd2"></div><div style="left:19px;top:24.5px;width:1.5px;height:2px;background:#8a9ab0"></div><div style="left:23px;top:28.0px;width:8px;height:1px;background:#b8bec6"></div><div style="left:21px;top:27.5px;width:1.5px;height:2px;background:#8a9ab0"></div><div style="left:23px;top:31.5px;width:5px;height:1px;background:#a8b0b8"></div><div style="left:23px;top:35.0px;width:10px;height:1px;background:#9aa6b4"></div><div style="left:17px;top:38.0px;width:12px;height:1px;background:#d0d4da"></div><div style="left:21px;top:41.0px;width:5px;height:1px;background:#a8b0b8"></div><div style="left:19px;top:40.5px;width:1.5px;height:2px;background:#8a9ab0"></div><div style="left:76px;top:0px;width:13px;height:46px;background:#262626"></div></div><div style="left:944px;top:325px;width:89px;height:50px;background:#222222;overflow:hidden"><div style="left:9px;top:0px;width:68px;height:50px;background:#ffffff"></div><div style="left:10px;top:1px;width:66px;height:3px;background:#ececec"></div><div style="left:12px;top:10px;width:6px;height:1px;background:#c8ccd2"></div><div style="left:12px;top:13px;width:10px;height:1px;background:#c8ccd2"></div><div style="left:10px;top:12.5px;width:1.5px;height:2px;background:#8a9ab0"></div><div style="left:18px;top:16px;width:8px;height:1px;background:#d0d4da"></div><div style="left:16px;top:19.5px;width:8px;height:1px;background:#a8b0b8"></div><div style="left:16px;top:23.0px;width:10px;height:1px;background:#b8bec6"></div><div style="left:12px;top:25.5px;width:9px;height:1px;background:#b8bec6"></div><div style="left:12px;top:28.5px;width:8px;height:1px;background:#c8ccd2"></div><div style="left:10px;top:28.0px;width:1.5px;height:2px;background:#8a9ab0"></div><div style="left:12px;top:32.0px;width:6px;height:1px;background:#c8ccd2"></div><div style="left:14px;top:35.0px;width:11px;height:1px;background:#b8bec6"></div><div style="left:12px;top:34.5px;width:1.5px;height:2px;background:#8a9ab0"></div><div style="left:14px;top:38.5px;width:7px;height:1px;background:#a8b0b8"></div><div style="left:16px;top:41.5px;width:6px;height:1px;background:#c8ccd2"></div><div style="left:14px;top:41.0px;width:1.5px;height:2px;background:#8a9ab0"></div><div style="left:16px;top:44.5px;width:6px;height:1px;background:#a8b0b8"></div><div style="left:14px;top:14px;width:22px;height:1.5px;background:#a8c0e0"></div><div style="left:28px;top:16px;width:14px;height:12px;background:repeating-linear-gradient(#fff 0 2px,#e0e4e8 2px 3px)"></div><div style="left:77px;top:0px;width:12px;height:50px;background:#282828"></div></div><div style="left:1052px;top:298px;width:90px;height:77px;background:#fafafa;overflow:hidden"><div style="left:0px;top:23px;width:90px;height:1px;background:#ddd"></div><div style="left:25px;top:1px;width:5px;height:2px;background:#333"></div></div><div style="left:1185px;top:329px;width:41px;height:46px;background:linear-gradient(90deg,#dcdcdc,#ffffff);overflow:hidden"></div><div style="left:1270px;top:317px;width:90px;height:58px;background:#222222;overflow:hidden"><div style="left:5px;top:0px;width:79px;height:58px;background:#ffffff"></div><div style="left:6px;top:1px;width:77px;height:2px;background:#f0f0f0"></div><div style="left:7px;top:4px;width:20px;height:1px;background:#bbb"></div><div style="left:13px;top:7px;width:10px;height:1px;background:#9aa6b4"></div><div style="left:13px;top:10.5px;width:9px;height:1px;background:#9aa6b4"></div><div style="left:11px;top:10.0px;width:1.5px;height:2px;background:#8a9ab0"></div><div style="left:15px;top:14.0px;width:8px;height:1px;background:#c8ccd2"></div><div style="left:13px;top:13.5px;width:1.5px;height:2px;background:#8a9ab0"></div><div style="left:9px;top:17.0px;width:5px;height:1px;background:#9aa6b4"></div><div style="left:13px;top:19.5px;width:8px;height:1px;background:#d0d4da"></div><div style="left:13px;top:22.5px;width:5px;height:1px;background:#9aa6b4"></div><div style="left:11px;top:22.0px;width:1.5px;height:2px;background:#8a9ab0"></div><div style="left:9px;top:25.0px;width:6px;height:1px;background:#9aa6b4"></div><div style="left:7px;top:24.5px;width:1.5px;height:2px;background:#8a9ab0"></div><div style="left:11px;top:28.5px;width:8px;height:1px;background:#9aa6b4"></div><div style="left:15px;top:31.5px;width:7px;height:1px;background:#d0d4da"></div><div style="left:13px;top:31.0px;width:1.5px;height:2px;background:#8a9ab0"></div><div style="left:13px;top:34.0px;width:10px;height:1px;background:#a8b0b8"></div><div style="left:15px;top:36.5px;width:7px;height:1px;background:#a8b0b8"></div><div style="left:9px;top:39.5px;width:5px;height:1px;background:#9aa6b4"></div><div style="left:9px;top:43.0px;width:11px;height:1px;background:#a8b0b8"></div><div style="left:15px;top:45.5px;width:5px;height:1px;background:#c8ccd2"></div><div style="left:13px;top:45.0px;width:1.5px;height:2px;background:#8a9ab0"></div><div style="left:13px;top:48.0px;width:8px;height:1px;background:#d0d4da"></div><div style="left:15px;top:51.0px;width:7px;height:1px;background:#a8b0b8"></div><div style="left:13px;top:50.5px;width:1.5px;height:2px;background:#8a9ab0"></div><div style="left:9px;top:54.0px;width:8px;height:1px;background:#b8bec6"></div><div style="left:7px;top:53.5px;width:1.5px;height:2px;background:#8a9ab0"></div><div style="left:10px;top:10px;width:14px;height:2px;background:#cfe0f4"></div><div style="left:26px;top:12px;width:14px;height:8px;background:#f4f4f4"></div><div style="left:27px;top:13px;width:10px;height:1px;background:#bbb"></div><div style="left:27px;top:16px;width:10px;height:1px;background:#bbb"></div><div style="left:84px;top:0px;width:6px;height:58px;background:#262626"></div></div><div style="left:1380px;top:326px;width:89px;height:49px;background:#202020;overflow:hidden"><div style="left:16px;top:1px;width:64px;height:49px;background:#ffffff"></div><div style="left:17px;top:2px;width:62px;height:2px;background:#f2f2f2"></div><div style="left:17px;top:6px;width:2px;height:40px;background:#e0e8f2"></div><div style="left:20px;top:8px;width:8px;height:1px;background:#b8bec6"></div><div style="left:20px;top:11.5px;width:6px;height:1px;background:#a8b0b8"></div><div style="left:20px;top:14.0px;width:9px;height:1px;background:#b8bec6"></div><div style="left:18px;top:13.5px;width:1.5px;height:2px;background:#8a9ab0"></div><div style="left:24px;top:17.0px;width:11px;height:1px;background:#b8bec6"></div><div style="left:24px;top:19.5px;width:9px;height:1px;background:#a8b0b8"></div><div style="left:20px;top:22.5px;width:5px;height:1px;background:#a8b0b8"></div><div style="left:20px;top:25.5px;width:11px;height:1px;background:#a8b0b8"></div><div style="left:22px;top:28.5px;width:9px;height:1px;background:#c8ccd2"></div><div style="left:24px;top:31.5px;width:5px;height:1px;background:#d0d4da"></div><div style="left:24px;top:34.5px;width:11px;height:1px;background:#d0d4da"></div><div style="left:22px;top:37.5px;width:10px;height:1px;background:#d0d4da"></div><div style="left:24px;top:40.5px;width:11px;height:1px;background:#9aa6b4"></div><div style="left:24px;top:43.0px;width:10px;height:1px;background:#b8bec6"></div><div style="left:20px;top:46.5px;width:8px;height:1px;background:#9aa6b4"></div><div style="left:18px;top:46.0px;width:1.5px;height:2px;background:#8a9ab0"></div><div style="left:80px;top:20px;width:8px;height:25px;background:#2a2a2a"></div><div style="left:88px;top:25px;width:1px;height:8px;background:#ddd"></div></div><div style="left:1488px;top:285px;width:80px;height:90px;background:#202020;overflow:hidden"></div><div style="left:1568px;top:285px;width:6px;height:90px;background:#ffffff;overflow:hidden"></div><div style="left:1599px;top:323px;width:87px;height:52px;background:#202020;overflow:hidden"><div style="left:8px;top:0px;width:70px;height:52px;background:#ffffff"></div><div style="left:9px;top:1px;width:68px;height:2px;background:#f4f4f4"></div><div style="left:13px;top:4px;width:2px;height:42px;background:#e0eaf4"></div><div style="left:20px;top:5px;width:7px;height:1px;background:#c8ccd2"></div><div style="left:20px;top:8px;width:13px;height:1px;background:#9aa6b4"></div><div style="left:18px;top:7.5px;width:1.5px;height:2px;background:#8a9ab0"></div><div style="left:22px;top:11px;width:12px;height:1px;background:#d0d4da"></div><div style="left:18px;top:13.5px;width:11px;height:1px;background:#a8b0b8"></div><div style="left:22px;top:16.0px;width:12px;height:1px;background:#d0d4da"></div><div style="left:18px;top:19.0px;width:13px;height:1px;background:#c8ccd2"></div><div style="left:16px;top:18.5px;width:1.5px;height:2px;background:#8a9ab0"></div><div style="left:18px;top:21.5px;width:9px;height:1px;background:#c8ccd2"></div><div style="left:22px;top:24.0px;width:10px;height:1px;background:#b8bec6"></div><div style="left:20px;top:27.0px;width:9px;height:1px;background:#a8b0b8"></div><div style="left:18px;top:26.5px;width:1.5px;height:2px;background:#8a9ab0"></div><div style="left:20px;top:30.0px;width:11px;height:1px;background:#d0d4da"></div><div style="left:18px;top:29.5px;width:1.5px;height:2px;background:#8a9ab0"></div><div style="left:16px;top:32.5px;width:10px;height:1px;background:#9aa6b4"></div><div style="left:16px;top:35.0px;width:6px;height:1px;background:#b8bec6"></div><div style="left:16px;top:37.5px;width:11px;height:1px;background:#a8b0b8"></div><div style="left:14px;top:37.0px;width:1.5px;height:2px;background:#8a9ab0"></div><div style="left:22px;top:40.5px;width:11px;height:1px;background:#d0d4da"></div><div style="left:20px;top:43.5px;width:13px;height:1px;background:#d0d4da"></div><div style="left:20px;top:46.5px;width:6px;height:1px;background:#b8bec6"></div><div style="left:79px;top:0px;width:8px;height:52px;background:#262626"></div></div><div style="left:1707px;top:318px;width:89px;height:57px;background:#242424;overflow:hidden"><div style="left:0px;top:0px;width:89px;height:2px;background:#1e1e1e"></div><div style="left:20px;top:3px;width:10px;height:1px;background:#777"></div><div style="left:14px;top:6.5px;width:7px;height:1px;background:#999"></div><div style="left:24px;top:6.5px;width:6px;height:1px;background:#999"></div><div style="left:32px;top:6px;width:10px;height:2px;background:#555"></div><div style="left:15px;top:12px;width:5px;height:1px;background:#888"></div><div style="left:58px;top:12px;width:15px;height:1px;background:#888"></div><div style="left:56px;top:11.5px;width:1.5px;height:2px;background:#ccc"></div><div style="left:15px;top:18px;width:7px;height:1px;background:#999"></div><div style="left:57px;top:17px;width:16px;height:2px;background:#666"></div><div style="left:15px;top:22px;width:6px;height:1px;background:#888"></div><div style="left:57px;top:22px;width:16px;height:1.5px;background:#555"></div><div style="left:20px;top:24px;width:33px;height:25px;background:linear-gradient(#fffffa,#fcfcf0)"></div><div style="left:22px;top:27px;width:6px;height:1px;background:#bbb"></div><div style="left:22px;top:30px;width:22px;height:1px;background:#ccc"></div><div style="left:22px;top:33px;width:14px;height:1px;background:#aaa"></div><div style="left:22px;top:39px;width:12px;height:1px;background:#ccc"></div><div style="left:22px;top:46px;width:30px;height:1.5px;background:#e8ecb0"></div><div style="left:57px;top:33px;width:16px;height:1px;background:#888"></div><div style="left:56px;top:32.5px;width:1.5px;height:2px;background:#ccc"></div><div style="left:57px;top:37px;width:16px;height:1px;background:#666"></div><div style="left:63px;top:42px;width:8px;height:1.5px;background:#666"></div><div style="left:15px;top:28px;width:2px;height:20px;background:repeating-linear-gradient(#555 0 1px,transparent 1px 5px)"></div></div><div style="left:1815px;top:323px;width:90px;height:52px;background:#1b1d22;overflow:hidden"><div style="left:0px;top:0px;width:90px;height:52px;background:linear-gradient(90deg,#1c2430 0%,#1a2a3a 14%,#1d1f24 15%)"></div><div style="left:17px;top:3px;width:11px;height:30px;background:repeating-linear-gradient(#1d1f24 0 3px,#3a3e48 3px 4px)"></div><svg style="left:0;top:0" width="90" height="52"><path d="M28 38L32 32L36 22L41 14L45 15L48 21L51 26L54 23L56 28L60 37L70 38L76 36L80 32L83 38L89 38L89 40L28 40Z" fill="#175a6a"/></svg><div style="left:0px;top:49px;width:90px;height:3px;background:#1a2c50"></div><div style="left:48px;top:49.5px;width:24px;height:2px;background:#2a3e68"></div></div><div style="left:180px;top:483px;width:90px;height:39px;background:#ffffff;overflow:hidden"><div style="left:20px;top:6px;width:12px;height:1px;background:#c8ccd4"></div><div style="left:44px;top:6px;width:3px;height:1px;background:#ccc"></div><div style="left:62px;top:5px;width:8px;height:1px;background:#ccc"></div><div style="left:62px;top:7.5px;width:8px;height:1px;background:#ddd"></div><div style="left:20px;top:30px;width:12px;height:1px;background:#c8ccd4"></div><div style="left:44px;top:30px;width:3px;height:1px;background:#ccc"></div><div style="left:62px;top:29px;width:8px;height:1px;background:#ccc"></div><div style="left:62px;top:31.5px;width:8px;height:1px;background:#ddd"></div><div style="left:0px;top:32px;width:90px;height:7px;background:linear-gradient(rgba(255,255,255,0),#eef0f2)"></div></div><div style="left:289px;top:486px;width:90px;height:36px;background:linear-gradient(90deg,#e2e6ea,#eef0f2 50%,#d8dadc);overflow:hidden"><div style="left:6px;top:5px;width:36px;height:2px;background:#6a6e78"></div><div style="left:6px;top:9px;width:34px;height:2px;background:#3a68a0"></div><div style="left:6px;top:13px;width:30px;height:2px;background:#e0303c"></div><div style="left:48px;top:0px;width:42px;height:34px;background:linear-gradient(90deg,#c8ccd0,#dcdcdc 50%,#b8b8b8)"></div><div style="left:78px;top:14px;width:12px;height:18px;background:#6a6c70"></div><div style="left:54px;top:6px;width:5px;height:6px;border-radius:50%;background:#3a3030"></div><div style="left:67px;top:9px;width:5px;height:6px;border-radius:50%;background:#2a2020"></div><div style="left:72px;top:7px;width:5px;height:6px;border-radius:50%;background:#2a2020"></div><div style="left:52px;top:12px;width:10px;height:12px;background:#e8e4e0"></div><div style="left:64px;top:15px;width:14px;height:10px;background:#d8a8a0"></div><div style="left:54px;top:24px;width:24px;height:7px;background:#1a4a6a"></div><div style="left:49px;top:28px;width:8px;height:6px;background:#c09070"></div><div style="left:0px;top:34px;width:90px;height:2px;background:#262626"></div><div style="left:33px;top:34.5px;width:10px;height:1px;background:repeating-linear-gradient(90deg,#aaa 0 1px,transparent 1px 2px)"></div></div><div style="left:398px;top:460px;width:90px;height:62px;background:#ffffff;overflow:hidden"><div style="left:0px;top:0px;width:90px;height:17px;background:linear-gradient(#9ebcd8,#a8c4dc 60%,#9ab8cc)"></div><div style="left:0px;top:17px;width:90px;height:2px;background:#b8ccd8"></div><div style="left:0px;top:19px;width:90px;height:9px;background:#f2f4f8"></div><div style="left:0px;top:23px;width:18px;height:1.8px;background:#7a7a80"></div><div style="left:0px;top:29px;width:90px;height:1px;background:#f8f8f8"></div><div style="left:0px;top:30.5px;width:9px;height:1.2px;background:#999"></div><div style="left:13px;top:30.5px;width:7px;height:1.2px;background:#999"></div><div style="left:24px;top:30.5px;width:6px;height:1.2px;background:#999"></div><div style="left:6px;top:38px;width:4px;height:3px;background:#c8c8c8"></div><div style="left:15px;top:38px;width:4px;height:3px;background:#d0d0d0"></div><div style="left:23px;top:37px;width:4px;height:4px;background:#3a6ad0"></div><div style="left:28px;top:38px;width:4px;height:3px;background:#b8b8a0"></div><div style="left:37px;top:39px;width:4px;height:2px;background:#c0c8b0"></div><div style="left:47px;top:37px;width:4px;height:3.5px;background:#60b8e8"></div><div style="left:58px;top:37px;width:3px;height:4px;background:#3a8a50"></div><div style="left:63px;top:37px;width:3px;height:4px;background:#e03030"></div><div style="left:69px;top:38px;width:2px;height:3px;background:#222"></div><div style="left:0px;top:44px;width:90px;height:1px;background:#666"></div><div style="left:1px;top:47px;width:30px;height:1.3px;background:#777"></div><div style="left:1px;top:51px;width:2px;height:3px;background:#777"></div><div style="left:5px;top:52px;width:42px;height:1.2px;background:#999"></div><div style="left:1px;top:56px;width:3px;height:3px;background:#3a7a50"></div><div style="left:5px;top:57px;width:20px;height:1.2px;background:#999"></div></div><div style="left:507px;top:471px;width:90px;height:51px;background:linear-gradient(90deg,#a8c0da,#c4d6e8 55%,#b0c6dc);overflow:hidden"><svg style="left:0;top:0" width="90" height="51"><path d="M12 49Q14 38 26 33Q40 28 52 22Q62 18 66 26Q68 32 72 36Q78 42 76 49Z" fill="#1a5ee8"/><path d="M22 46Q36 36 54 34M40 48Q54 40 70 42" fill="none" stroke="#5aa0ff" stroke-width="1.3" opacity="0.7"/></svg><div style="left:16px;top:7px;width:46px;height:32px;background:#fbfbfb"></div><div style="left:17px;top:8px;width:44px;height:2px;background:#e8e8e8"></div><div style="left:19px;top:12px;width:3px;height:24px;background:repeating-linear-gradient(#fff 0 2px,#b8c0c8 2px 3px)"></div><div style="left:23px;top:13px;width:12px;height:1px;background:#c8c8c8"></div><div style="left:0px;top:49px;width:90px;height:2px;background:#2a2e38"></div><div style="left:36px;top:49.5px;width:18px;height:1px;background:#8aa0c0"></div></div><div style="left:617px;top:432px;width:88px;height:90px;background:linear-gradient(175deg,#2a84ff 0%,#0a50f0 30%,#0040e6 60%,#0a3ad8 100%);overflow:hidden"><div style="left:-41px;top:52px;width:108px;height:108px;border-radius:50%;background:radial-gradient(circle at 50% 20%,#3aa6ff,#2a8af8 60%,#1a70f0);box-shadow:inset 0 1px 2px rgba(180,220,255,0.7)"></div></div><div style="left:725px;top:474px;width:90px;height:48px;background:linear-gradient(90deg,#a4bcd6,#c0d2e4 60%,#b4c8dc);overflow:hidden"><svg style="left:0;top:0" width="90" height="48"><defs><linearGradient id="bl" x1="0" y1="0" x2="1" y2="1"><stop offset="0" stop-color="#3a8cff"/><stop offset="0.6" stop-color="#0e4ee0"/><stop offset="1" stop-color="#0838b8"/></linearGradient></defs><path d="M13 48Q12 32 26 22Q34 8 48 5Q62 4 62 20Q63 26 66 27Q77 29 78 42L78 48Z" fill="url(#bl)"/><path d="M22 40Q30 24 44 16M30 44Q40 30 55 24M45 48Q52 36 66 34" fill="none" stroke="#62a8ff" stroke-width="1.6" opacity="0.7"/><path d="M36 46Q46 32 60 30" fill="none" stroke="#0a2a90" stroke-width="1.5" opacity="0.6"/></svg></div><div class="t" style="left:171px;top:235px;width:110px;text-align:center;font-size:11.5px;color:#f4f4f4;-webkit-text-stroke:0.1px #f4f4f4">Screenshot</div><div class="t" style="left:171px;top:250px;width:110px;text-align:center;font-size:11.5px;color:#f4f4f4;-webkit-text-stroke:0.1px #f4f4f4">2025-03-04</div><div class="t" style="left:171px;top:265px;width:110px;text-align:center;font-size:11.5px;color:#f4f4f4;-webkit-text-stroke:0.1px #f4f4f4">144939.png</div><div class="t" style="left:280px;top:235px;width:110px;text-align:center;font-size:11.5px;color:#f4f4f4;-webkit-text-stroke:0.1px #f4f4f4">Screenshot</div><div class="t" style="left:280px;top:250px;width:110px;text-align:center;font-size:11.5px;color:#f4f4f4;-webkit-text-stroke:0.1px #f4f4f4">2025-03-04</div><div class="t" style="left:280px;top:265px;width:110px;text-align:center;font-size:11.5px;color:#f4f4f4;-webkit-text-stroke:0.1px #f4f4f4">151311.png</div><div class="t" style="left:389px;top:235px;width:110px;text-align:center;font-size:11.5px;color:#f4f4f4;-webkit-text-stroke:0.1px #f4f4f4">Screenshot</div><div class="t" style="left:389px;top:250px;width:110px;text-align:center;font-size:11.5px;color:#f4f4f4;-webkit-text-stroke:0.1px #f4f4f4">2025-03-04</div><div class="t" style="left:389px;top:265px;width:110px;text-align:center;font-size:11.5px;color:#f4f4f4;-webkit-text-stroke:0.1px #f4f4f4">153109.png</div><div class="t" style="left:498px;top:235px;width:110px;text-align:center;font-size:11.5px;color:#f4f4f4;-webkit-text-stroke:0.1px #f4f4f4">Screenshot</div><div class="t" style="left:498px;top:250px;width:110px;text-align:center;font-size:11.5px;color:#f4f4f4;-webkit-text-stroke:0.1px #f4f4f4">2025-03-04</div><div class="t" style="left:498px;top:265px;width:110px;text-align:center;font-size:11.5px;color:#f4f4f4;-webkit-text-stroke:0.1px #f4f4f4">153112.png</div><div class="t" style="left:607px;top:235px;width:110px;text-align:center;font-size:11.5px;color:#f4f4f4;-webkit-text-stroke:0.1px #f4f4f4">Screenshot</div><div class="t" style="left:607px;top:250px;width:110px;text-align:center;font-size:11.5px;color:#f4f4f4;-webkit-text-stroke:0.1px #f4f4f4">2025-03-04</div><div class="t" style="left:607px;top:265px;width:110px;text-align:center;font-size:11.5px;color:#f4f4f4;-webkit-text-stroke:0.1px #f4f4f4">172345.png</div><div class="t" style="left:716px;top:235px;width:110px;text-align:center;font-size:11.5px;color:#f4f4f4;-webkit-text-stroke:0.1px #f4f4f4">Screenshot</div><div class="t" style="left:716px;top:250px;width:110px;text-align:center;font-size:11.5px;color:#f4f4f4;-webkit-text-stroke:0.1px #f4f4f4">2025-03-04</div><div class="t" style="left:716px;top:265px;width:110px;text-align:center;font-size:11.5px;color:#f4f4f4;-webkit-text-stroke:0.1px #f4f4f4">184627.png</div><div class="t" style="left:825px;top:235px;width:110px;text-align:center;font-size:11.5px;color:#f4f4f4;-webkit-text-stroke:0.1px #f4f4f4">Screenshot</div><div class="t" style="left:825px;top:250px;width:110px;text-align:center;font-size:11.5px;color:#f4f4f4;-webkit-text-stroke:0.1px #f4f4f4">2025-03-04</div><div class="t" style="left:825px;top:265px;width:110px;text-align:center;font-size:11.5px;color:#f4f4f4;-webkit-text-stroke:0.1px #f4f4f4">184933.png</div><div class="t" style="left:934px;top:235px;width:110px;text-align:center;font-size:11.5px;color:#f4f4f4;-webkit-text-stroke:0.1px #f4f4f4">Screenshot</div><div class="t" style="left:934px;top:250px;width:110px;text-align:center;font-size:11.5px;color:#f4f4f4;-webkit-text-stroke:0.1px #f4f4f4">2025-03-04</div><div class="t" style="left:934px;top:265px;width:110px;text-align:center;font-size:11.5px;color:#f4f4f4;-webkit-text-stroke:0.1px #f4f4f4">195029.png</div><div class="t" style="left:1043px;top:235px;width:110px;text-align:center;font-size:11.5px;color:#f4f4f4;-webkit-text-stroke:0.1px #f4f4f4">Screenshot</div><div class="t" style="left:1043px;top:250px;width:110px;text-align:center;font-size:11.5px;color:#f4f4f4;-webkit-text-stroke:0.1px #f4f4f4">2025-03-04</div><div class="t" style="left:1043px;top:265px;width:110px;text-align:center;font-size:11.5px;color:#f4f4f4;-webkit-text-stroke:0.1px #f4f4f4">195110.png</div><div class="t" style="left:1152px;top:235px;width:110px;text-align:center;font-size:11.5px;color:#f4f4f4;-webkit-text-stroke:0.1px #f4f4f4">Screenshot</div><div class="t" style="left:1152px;top:250px;width:110px;text-align:center;font-size:11.5px;color:#f4f4f4;-webkit-text-stroke:0.1px #f4f4f4">2025-03-04</div><div class="t" style="left:1152px;top:265px;width:110px;text-align:center;font-size:11.5px;color:#f4f4f4;-webkit-text-stroke:0.1px #f4f4f4">195128.png</div><div class="t" style="left:1261px;top:235px;width:110px;text-align:center;font-size:11.5px;color:#f4f4f4;-webkit-text-stroke:0.1px #f4f4f4">Screenshot</div><div class="t" style="left:1261px;top:250px;width:110px;text-align:center;font-size:11.5px;color:#f4f4f4;-webkit-text-stroke:0.1px #f4f4f4">2025-03-04</div><div class="t" style="left:1261px;top:265px;width:110px;text-align:center;font-size:11.5px;color:#f4f4f4;-webkit-text-stroke:0.1px #f4f4f4">195601.png</div><div class="t" style="left:1370px;top:235px;width:110px;text-align:center;font-size:11.5px;color:#f4f4f4;-webkit-text-stroke:0.1px #f4f4f4">Screenshot</div><div class="t" style="left:1370px;top:250px;width:110px;text-align:center;font-size:11.5px;color:#f4f4f4;-webkit-text-stroke:0.1px #f4f4f4">2025-03-04</div><div class="t" style="left:1370px;top:265px;width:110px;text-align:center;font-size:11.5px;color:#f4f4f4;-webkit-text-stroke:0.1px #f4f4f4">195710.png</div><div class="t" style="left:1479px;top:235px;width:110px;text-align:center;font-size:11.5px;color:#f4f4f4;-webkit-text-stroke:0.1px #f4f4f4">Screenshot</div><div class="t" style="left:1479px;top:250px;width:110px;text-align:center;font-size:11.5px;color:#f4f4f4;-webkit-text-stroke:0.1px #f4f4f4">2025-04-11</div><div class="t" style="left:1479px;top:265px;width:110px;text-align:center;font-size:11.5px;color:#f4f4f4;-webkit-text-stroke:0.1px #f4f4f4">175131.png</div><div class="t" style="left:1588px;top:235px;width:110px;text-align:center;font-size:11.5px;color:#f4f4f4;-webkit-text-stroke:0.1px #f4f4f4">Screenshot</div><div class="t" style="left:1588px;top:250px;width:110px;text-align:center;font-size:11.5px;color:#f4f4f4;-webkit-text-stroke:0.1px #f4f4f4">2025-04-11</div><div class="t" style="left:1588px;top:265px;width:110px;text-align:center;font-size:11.5px;color:#f4f4f4;-webkit-text-stroke:0.1px #f4f4f4">180147.png</div><div class="t" style="left:1697px;top:235px;width:110px;text-align:center;font-size:11.5px;color:#f4f4f4;-webkit-text-stroke:0.1px #f4f4f4">Screenshot</div><div class="t" style="left:1697px;top:250px;width:110px;text-align:center;font-size:11.5px;color:#f4f4f4;-webkit-text-stroke:0.1px #f4f4f4">2025-06-09</div><div class="t" style="left:1697px;top:265px;width:110px;text-align:center;font-size:11.5px;color:#f4f4f4;-webkit-text-stroke:0.1px #f4f4f4">044852.png</div><div class="t" style="left:1806px;top:235px;width:110px;text-align:center;font-size:11.5px;color:#f4f4f4;-webkit-text-stroke:0.1px #f4f4f4">Screenshot</div><div class="t" style="left:1806px;top:250px;width:110px;text-align:center;font-size:11.5px;color:#f4f4f4;-webkit-text-stroke:0.1px #f4f4f4">2025-07-24</div><div class="t" style="left:1806px;top:265px;width:110px;text-align:center;font-size:11.5px;color:#f4f4f4;-webkit-text-stroke:0.1px #f4f4f4">004926.png</div><div class="t" style="left:171px;top:382px;width:110px;text-align:center;font-size:11.5px;color:#f4f4f4;-webkit-text-stroke:0.1px #f4f4f4">Screenshot</div><div class="t" style="left:171px;top:397px;width:110px;text-align:center;font-size:11.5px;color:#f4f4f4;-webkit-text-stroke:0.1px #f4f4f4">2025-09-05</div><div class="t" style="left:171px;top:412px;width:110px;text-align:center;font-size:11.5px;color:#f4f4f4;-webkit-text-stroke:0.1px #f4f4f4">045334.png</div><div class="t" style="left:280px;top:382px;width:110px;text-align:center;font-size:11.5px;color:#f4f4f4;-webkit-text-stroke:0.1px #f4f4f4">Screenshot</div><div class="t" style="left:280px;top:397px;width:110px;text-align:center;font-size:11.5px;color:#f4f4f4;-webkit-text-stroke:0.1px #f4f4f4">2025-10-09</div><div class="t" style="left:280px;top:412px;width:110px;text-align:center;font-size:11.5px;color:#f4f4f4;-webkit-text-stroke:0.1px #f4f4f4">053448.png</div><div class="t" style="left:389px;top:382px;width:110px;text-align:center;font-size:11.5px;color:#f4f4f4;-webkit-text-stroke:0.1px #f4f4f4">Screenshot</div><div class="t" style="left:389px;top:397px;width:110px;text-align:center;font-size:11.5px;color:#f4f4f4;-webkit-text-stroke:0.1px #f4f4f4">2025-10-15</div><div class="t" style="left:389px;top:412px;width:110px;text-align:center;font-size:11.5px;color:#f4f4f4;-webkit-text-stroke:0.1px #f4f4f4">161728.png</div><div class="t" style="left:498px;top:382px;width:110px;text-align:center;font-size:11.5px;color:#f4f4f4;-webkit-text-stroke:0.1px #f4f4f4">Screenshot</div><div class="t" style="left:498px;top:397px;width:110px;text-align:center;font-size:11.5px;color:#f4f4f4;-webkit-text-stroke:0.1px #f4f4f4">2025-10-15</div><div class="t" style="left:498px;top:412px;width:110px;text-align:center;font-size:11.5px;color:#f4f4f4;-webkit-text-stroke:0.1px #f4f4f4">162511.png</div><div class="t" style="left:607px;top:382px;width:110px;text-align:center;font-size:11.5px;color:#f4f4f4;-webkit-text-stroke:0.1px #f4f4f4">Screenshot</div><div class="t" style="left:607px;top:397px;width:110px;text-align:center;font-size:11.5px;color:#f4f4f4;-webkit-text-stroke:0.1px #f4f4f4">2025-10-15</div><div class="t" style="left:607px;top:412px;width:110px;text-align:center;font-size:11.5px;color:#f4f4f4;-webkit-text-stroke:0.1px #f4f4f4">162658.png</div><div class="t" style="left:716px;top:382px;width:110px;text-align:center;font-size:11.5px;color:#f4f4f4;-webkit-text-stroke:0.1px #f4f4f4">Screenshot</div><div class="t" style="left:716px;top:397px;width:110px;text-align:center;font-size:11.5px;color:#f4f4f4;-webkit-text-stroke:0.1px #f4f4f4">2025-10-15</div><div class="t" style="left:716px;top:412px;width:110px;text-align:center;font-size:11.5px;color:#f4f4f4;-webkit-text-stroke:0.1px #f4f4f4">162722.png</div><div class="t" style="left:825px;top:382px;width:110px;text-align:center;font-size:11.5px;color:#f4f4f4;-webkit-text-stroke:0.1px #f4f4f4">Screenshot</div><div class="t" style="left:825px;top:397px;width:110px;text-align:center;font-size:11.5px;color:#f4f4f4;-webkit-text-stroke:0.1px #f4f4f4">2025-10-15</div><div class="t" style="left:825px;top:412px;width:110px;text-align:center;font-size:11.5px;color:#f4f4f4;-webkit-text-stroke:0.1px #f4f4f4">162911.png</div><div class="t" style="left:934px;top:382px;width:110px;text-align:center;font-size:11.5px;color:#f4f4f4;-webkit-text-stroke:0.1px #f4f4f4">Screenshot</div><div class="t" style="left:934px;top:397px;width:110px;text-align:center;font-size:11.5px;color:#f4f4f4;-webkit-text-stroke:0.1px #f4f4f4">2025-10-15</div><div class="t" style="left:934px;top:412px;width:110px;text-align:center;font-size:11.5px;color:#f4f4f4;-webkit-text-stroke:0.1px #f4f4f4">163101.png</div><div class="t" style="left:1043px;top:382px;width:110px;text-align:center;font-size:11.5px;color:#f4f4f4;-webkit-text-stroke:0.1px #f4f4f4">Screenshot</div><div class="t" style="left:1043px;top:397px;width:110px;text-align:center;font-size:11.5px;color:#f4f4f4;-webkit-text-stroke:0.1px #f4f4f4">2025-10-15</div><div class="t" style="left:1043px;top:412px;width:110px;text-align:center;font-size:11.5px;color:#f4f4f4;-webkit-text-stroke:0.1px #f4f4f4">163241.png</div><div class="t" style="left:1152px;top:382px;width:110px;text-align:center;font-size:11.5px;color:#f4f4f4;-webkit-text-stroke:0.1px #f4f4f4">Screenshot</div><div class="t" style="left:1152px;top:397px;width:110px;text-align:center;font-size:11.5px;color:#f4f4f4;-webkit-text-stroke:0.1px #f4f4f4">2025-10-15</div><div class="t" style="left:1152px;top:412px;width:110px;text-align:center;font-size:11.5px;color:#f4f4f4;-webkit-text-stroke:0.1px #f4f4f4">163246.png</div><div class="t" style="left:1261px;top:382px;width:110px;text-align:center;font-size:11.5px;color:#f4f4f4;-webkit-text-stroke:0.1px #f4f4f4">Screenshot</div><div class="t" style="left:1261px;top:397px;width:110px;text-align:center;font-size:11.5px;color:#f4f4f4;-webkit-text-stroke:0.1px #f4f4f4">2025-10-15</div><div class="t" style="left:1261px;top:412px;width:110px;text-align:center;font-size:11.5px;color:#f4f4f4;-webkit-text-stroke:0.1px #f4f4f4">163259.png</div><div class="t" style="left:1370px;top:382px;width:110px;text-align:center;font-size:11.5px;color:#f4f4f4;-webkit-text-stroke:0.1px #f4f4f4">Screenshot</div><div class="t" style="left:1370px;top:397px;width:110px;text-align:center;font-size:11.5px;color:#f4f4f4;-webkit-text-stroke:0.1px #f4f4f4">2025-10-15</div><div class="t" style="left:1370px;top:412px;width:110px;text-align:center;font-size:11.5px;color:#f4f4f4;-webkit-text-stroke:0.1px #f4f4f4">165039.png</div><div class="t" style="left:1479px;top:382px;width:110px;text-align:center;font-size:11.5px;color:#f4f4f4;-webkit-text-stroke:0.1px #f4f4f4">Screenshot</div><div class="t" style="left:1479px;top:397px;width:110px;text-align:center;font-size:11.5px;color:#f4f4f4;-webkit-text-stroke:0.1px #f4f4f4">2025-10-15</div><div class="t" style="left:1479px;top:412px;width:110px;text-align:center;font-size:11.5px;color:#f4f4f4;-webkit-text-stroke:0.1px #f4f4f4">165050.png</div><div class="t" style="left:1588px;top:382px;width:110px;text-align:center;font-size:11.5px;color:#f4f4f4;-webkit-text-stroke:0.1px #f4f4f4">Screenshot</div><div class="t" style="left:1588px;top:397px;width:110px;text-align:center;font-size:11.5px;color:#f4f4f4;-webkit-text-stroke:0.1px #f4f4f4">2025-10-15</div><div class="t" style="left:1588px;top:412px;width:110px;text-align:center;font-size:11.5px;color:#f4f4f4;-webkit-text-stroke:0.1px #f4f4f4">165103.png</div><div class="t" style="left:1697px;top:382px;width:110px;text-align:center;font-size:11.5px;color:#f4f4f4;-webkit-text-stroke:0.1px #f4f4f4">Screenshot</div><div class="t" style="left:1697px;top:397px;width:110px;text-align:center;font-size:11.5px;color:#f4f4f4;-webkit-text-stroke:0.1px #f4f4f4">2025-10-16</div><div class="t" style="left:1697px;top:412px;width:110px;text-align:center;font-size:11.5px;color:#f4f4f4;-webkit-text-stroke:0.1px #f4f4f4">214858.png</div><div class="t" style="left:1806px;top:382px;width:110px;text-align:center;font-size:11.5px;color:#f4f4f4;-webkit-text-stroke:0.1px #f4f4f4">Screenshot</div><div class="t" style="left:1806px;top:397px;width:110px;text-align:center;font-size:11.5px;color:#f4f4f4;-webkit-text-stroke:0.1px #f4f4f4">2025-10-16</div><div class="t" style="left:1806px;top:412px;width:110px;text-align:center;font-size:11.5px;color:#f4f4f4;-webkit-text-stroke:0.1px #f4f4f4">224958.png</div><div class="t" style="left:171px;top:529px;width:110px;text-align:center;font-size:11.5px;color:#f4f4f4;-webkit-text-stroke:0.1px #f4f4f4">Screenshot</div><div class="t" style="left:171px;top:544px;width:110px;text-align:center;font-size:11.5px;color:#f4f4f4;-webkit-text-stroke:0.1px #f4f4f4">2025-10-20</div><div class="t" style="left:171px;top:559px;width:110px;text-align:center;font-size:11.5px;color:#f4f4f4;-webkit-text-stroke:0.1px #f4f4f4">011350.png</div><div class="t" style="left:280px;top:529px;width:110px;text-align:center;font-size:11.5px;color:#f4f4f4;-webkit-text-stroke:0.1px #f4f4f4">Screenshot</div><div class="t" style="left:280px;top:544px;width:110px;text-align:center;font-size:11.5px;color:#f4f4f4;-webkit-text-stroke:0.1px #f4f4f4">2025-10-28</div><div class="t" style="left:280px;top:559px;width:110px;text-align:center;font-size:11.5px;color:#f4f4f4;-webkit-text-stroke:0.1px #f4f4f4">153728.png</div><div class="t" style="left:389px;top:529px;width:110px;text-align:center;font-size:11.5px;color:#f4f4f4;-webkit-text-stroke:0.1px #f4f4f4">Screenshot</div><div class="t" style="left:389px;top:544px;width:110px;text-align:center;font-size:11.5px;color:#f4f4f4;-webkit-text-stroke:0.1px #f4f4f4">2025-11-14</div><div class="t" style="left:389px;top:559px;width:110px;text-align:center;font-size:11.5px;color:#f4f4f4;-webkit-text-stroke:0.1px #f4f4f4">050709.png</div><div class="t" style="left:498px;top:529px;width:110px;text-align:center;font-size:11.5px;color:#f4f4f4;-webkit-text-stroke:0.1px #f4f4f4">Screenshot</div><div class="t" style="left:498px;top:544px;width:110px;text-align:center;font-size:11.5px;color:#f4f4f4;-webkit-text-stroke:0.1px #f4f4f4">2025-11-14</div><div class="t" style="left:498px;top:559px;width:110px;text-align:center;font-size:11.5px;color:#f4f4f4;-webkit-text-stroke:0.1px #f4f4f4">050714.png</div><div class="t" style="left:607px;top:529px;width:110px;text-align:center;font-size:11.5px;color:#f4f4f4;-webkit-text-stroke:0.1px #f4f4f4">Screenshot</div><div class="t" style="left:607px;top:544px;width:110px;text-align:center;font-size:11.5px;color:#f4f4f4;-webkit-text-stroke:0.1px #f4f4f4">2025-11-15</div><div class="t" style="left:607px;top:559px;width:110px;text-align:center;font-size:11.5px;color:#f4f4f4;-webkit-text-stroke:0.1px #f4f4f4">042253.png</div><div class="t" style="left:716px;top:529px;width:110px;text-align:center;font-size:11.5px;color:#f4f4f4;-webkit-text-stroke:0.1px #f4f4f4">Screenshot</div><div class="t" style="left:716px;top:544px;width:110px;text-align:center;font-size:11.5px;color:#f4f4f4;-webkit-text-stroke:0.1px #f4f4f4">2025-11-15</div><div class="t" style="left:716px;top:559px;width:110px;text-align:center;font-size:11.5px;color:#f4f4f4;-webkit-text-stroke:0.1px #f4f4f4">042448.png</div><div style="left:0px;top:1008px;width:1919px;height:25px;background:#1c1c1c"></div><div class="t" style="left:14px;top:1015px;font-size:11.5px;color:#e8e8e8;">38 items</div><div style="left:67px;top:1013px;width:1px;height:12px;background:#d8d8d8"></div><div class="t" style="left:79px;top:1015px;font-size:11.5px;color:#e8e8e8;">1 item selected</div><div class="t" style="left:164px;top:1015px;font-size:11.5px;color:#e8e8e8;">1.34 MB</div><div style="left:215px;top:1013px;width:1px;height:12px;background:#d8d8d8"></div><svg style="left:1872px;top:1012px" width="16" height="16" viewBox="0 0 16 16"><rect x="0" y="0" width="16" height="16" rx="2.5" fill="#dcdcdc"/><path d="M2 3.6H14M2 6.6H14M2 9.6H14M2 12.6H14" stroke="#111" stroke-width="1.2"/></svg><div style="left:1892px;top:1008px;width:24px;height:24px;background:#555;border:1px solid #6a6a6a"></div><svg style="left:1897px;top:1013px" width="16" height="16" viewBox="0 0 16 16"><rect x="0" y="0" width="16" height="16" rx="3" fill="#dcdcdc"/><rect x="2.2" y="2.2" width="11.6" height="8.8" rx="1.3" fill="#fff" stroke="#111" stroke-width="1.2"/><path d="M2 13.3H14" stroke="#111" stroke-width="1.2"/></svg><div style="left:0px;top:1032px;width:1919px;height:44px;background:linear-gradient(90deg,#232a34 0%,#232a34 17%,#1a2440 20%,#162248 23%,#131f4e 40%,#121f50 55%,#141f4a 70%,#182240 74.5%,#222a34 77%,#212a33 100%)"></div><div style="left:0px;top:1032px;width:1919px;height:1px;background:#4a5666"></div><svg style="left:21px;top:1038px" width="26" height="26" viewBox="0 0 26 26"><rect x="0" y="8.5" width="20" height="16" rx="4" fill="#5a6ef0"/><path d="M7 12L13 16L7 20Z" fill="#fff"/><circle cx="17" cy="8" r="7.5" fill="#f08a8a"/><text x="17" y="11.5" font-size="10" text-anchor="middle" fill="#222" font-family="Liberation Sans">1</text></svg><div class="t" style="left:51px;top:1043px;font-size:12px;color:#ffffff;">Trending videos</div><div class="t" style="left:51px;top:1058px;font-size:12px;color:#d0d4da;">Stranger Things...</div><div style="left:853px;top:1036px;width:40px;height:40px;background:rgba(255,255,255,0.08);border-radius:4px"></div><svg style="left:773px;top:1045px" width="24" height="24" viewBox="0 0 24 24"><rect x="0" y="0" width="11.3" height="11.3" fill="#4cc8ff"/><rect x="12.7" y="0" width="11.3" height="11.3" fill="#4cc2ff"/><rect x="0" y="12.7" width="11.3" height="11.3" fill="#3ab8f8"/><rect x="12.7" y="12.7" width="11.3" height="11.3" fill="#38b0f0"/></svg><svg style="left:817px;top:1045px" width="24" height="22" viewBox="0 0 24 22"><rect x="0" y="6" width="17" height="16" rx="1.5" fill="#6a6a6a"/><rect x="7" y="0" width="17" height="16" rx="1.5" fill="#e8e8e8"/><rect x="4" y="6" width="13" height="10" fill="#a8a8a8"/></svg><svg style="left:860px;top:1045px" width="26" height="22" viewBox="0 0 26 22"><path d="M0 2Q0 0 2 0H9L11 2.5H24Q26 2.5 26 4.5V20Q26 22 24 22H2Q0 22 0 20Z" fill="#f5c03a"/><rect x="0" y="5" width="26" height="17" rx="1.5" fill="#ffd65c"/><rect x="6" y="13" width="14" height="7" fill="#1d7ad8"/></svg><div style="left:865px;top:1072px;width:16px;height:3px;background:#4cc2ff;border-radius:2px"></div><svg style="left:906px;top:1044px" width="23" height="21" viewBox="0 0 23 21"><rect width="23" height="21" rx="3" fill="#0a1a30"/><text x="11.5" y="15" font-size="12" font-weight="bold" text-anchor="middle" fill="#31a8ff" font-family="Liberation Sans">Ps</text></svg><svg style="left:949px;top:1042px" width="28" height="27" viewBox="0 0 28 27"><path d="M12.5 14L2.11 8A12 12 0 0 1 22.89 8Z" fill="#e34133"/><path d="M12.5 14L22.89 8A12 12 0 0 1 12.5 26Z" fill="#fbbc05"/><path d="M12.5 14L12.5 26A12 12 0 0 1 2.11 8Z" fill="#34a853"/><circle cx="12.5" cy="14" r="5.4" fill="#fff"/><circle cx="12.5" cy="14" r="4.3" fill="#4285f4"/><circle cx="20" cy="8" r="7.5" fill="#3a2010"/><circle cx="20" cy="8" r="5" fill="#a04018"/></svg><svg style="left:993px;top:1042px" width="28" height="27" viewBox="0 0 28 27"><path d="M12.5 14L2.11 8A12 12 0 0 1 22.89 8Z" fill="#e34133"/><path d="M12.5 14L22.89 8A12 12 0 0 1 12.5 26Z" fill="#fbbc05"/><path d="M12.5 14L12.5 26A12 12 0 0 1 2.11 8Z" fill="#34a853"/><circle cx="12.5" cy="14" r="5.4" fill="#fff"/><circle cx="12.5" cy="14" r="4.3" fill="#4285f4"/><circle cx="20" cy="8" r="7.5" fill="#4a78f0"/><circle cx="17.5" cy="9" r="1" fill="#dde"/><circle cx="22.5" cy="9" r="1" fill="#dde"/></svg><svg style="left:1037px;top:1042px" width="28" height="27" viewBox="0 0 28 27"><path d="M12.5 14L2.11 8A12 12 0 0 1 22.89 8Z" fill="#e34133"/><path d="M12.5 14L22.89 8A12 12 0 0 1 12.5 26Z" fill="#fbbc05"/><path d="M12.5 14L12.5 26A12 12 0 0 1 2.11 8Z" fill="#34a853"/><circle cx="12.5" cy="14" r="5.4" fill="#fff"/><circle cx="12.5" cy="14" r="4.3" fill="#4285f4"/><circle cx="20" cy="8" r="7.5" fill="#e8d8c8"/><circle cx="20" cy="8" r="4.5" fill="#8a6a50"/></svg><svg style="left:1081px;top:1044px" width="24" height="24" viewBox="0 0 24 24"><rect width="24" height="24" rx="4.5" fill="#22383e"/><rect x="0" y="18" width="24" height="6" rx="2" fill="#2c4650"/><path d="M12 2.5L15.5 6L12 9.5L8.5 6Z" fill="#ffffff"/><path d="M8 16L14 10L16 12L10 18Z" fill="#3ee0b8"/><path d="M9 20.5H15" stroke="#e0e0e0" stroke-width="1.2"/></svg><svg style="left:1126px;top:1043px" width="24" height="25" viewBox="0 0 24 25"><path d="M10 1H14L22 22H2Z" fill="#f07800"/><path d="M6.2 12H17.8L19 15.5H5Z" fill="#f4f0ea"/><path d="M8.3 6.5H15.7L16.5 9H7.5Z" fill="#f4f0ea"/><rect x="0.5" y="21" width="23" height="3.5" rx="1" fill="#e87000"/></svg><div style="left:914px;top:1073px;width:6px;height:2px;background:#8a94a0;border-radius:1px"></div><div style="left:958px;top:1073px;width:6px;height:2px;background:#8a94a0;border-radius:1px"></div><div style="left:1002px;top:1073px;width:6px;height:2px;background:#8a94a0;border-radius:1px"></div><div style="left:1046px;top:1073px;width:6px;height:2px;background:#8a94a0;border-radius:1px"></div><div style="left:1090px;top:1073px;width:6px;height:2px;background:#8a94a0;border-radius:1px"></div><div style="left:1134px;top:1073px;width:6px;height:2px;background:#8a94a0;border-radius:1px"></div><div class="t" style="left:1820px;top:1043px;width:80px;text-align:right;font-size:12px;color:#ffffff">5:21 AM</div><div class="t" style="left:1820px;top:1058px;width:80px;text-align:right;font-size:12px;color:#ffffff">11/15/2025</div><div style="left:206px;top:16px;width:261px;height:64px;border:4.5px solid #14f03c;border-radius:3px"></div><div style="left:686px;top:394px;width:224px;height:244px;border:4.5px solid #14f03c;border-radius:3px"></div><div style="left:17.5px;top:352px;width:141px;height:44px;border:4.5px solid #14f03c;border-radius:3px"></div></body></html>
